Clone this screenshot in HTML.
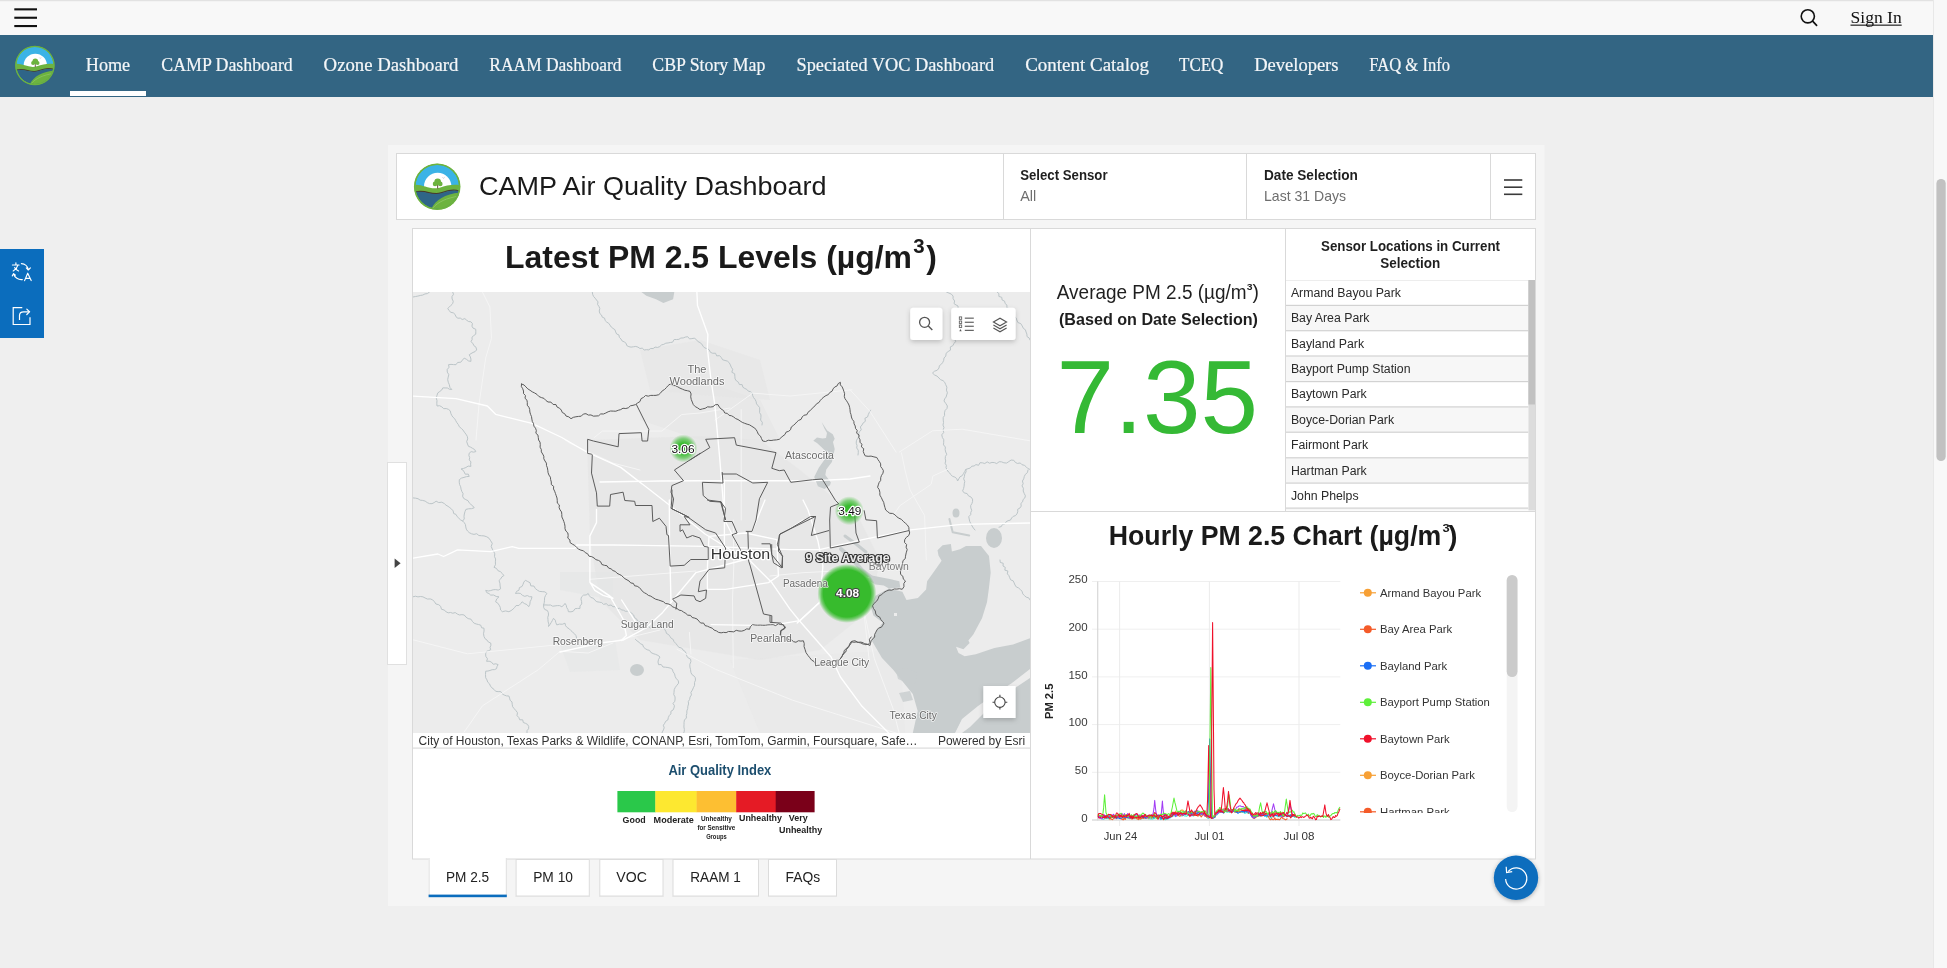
<!DOCTYPE html>
<html><head><meta charset="utf-8"><title>CAMP Air Quality Dashboard</title>
<style>html,body{margin:0;padding:0;width:1947px;height:968px;overflow:hidden;background:#efefef}svg{display:block;font-family:'Liberation Sans',sans-serif;will-change:transform}</style>
</head><body>
<svg width="1947" height="968" viewBox="0 0 1947 968">
<defs>
<filter id="fabsh" x="-50%" y="-50%" width="200%" height="200%"><feDropShadow dx="0" dy="1" stdDeviation="2" flood-opacity="0.3"/></filter>
<filter id="btnsh" x="-30%" y="-30%" width="160%" height="160%"><feDropShadow dx="0" dy="2" stdDeviation="2.5" flood-opacity="0.2"/></filter>
</defs>
<rect x="0" y="0" width="1933" height="35" fill="#f8f8f8" />
<rect x="0" y="0" width="1933" height="1.2" fill="#e2e2e2" />
<rect x="14.3" y="8.3" width="22.7" height="2.1" fill="#111" />
<rect x="14.3" y="16.7" width="22.7" height="2.1" fill="#111" />
<rect x="14.3" y="25" width="22.7" height="2.1" fill="#111" />
<circle cx="1807.8" cy="16.3" r="6.6" fill="none" stroke="#111" stroke-width="1.6"/>
<line x1="1812.6" y1="21.2" x2="1816.6" y2="25.4" stroke="#111" stroke-width="1.7" stroke-linecap="round"/>
<text x="1850.5" y="23" font-size="17.5" fill="#111" font-family="'Liberation Serif',serif" textLength="51.2" lengthAdjust="spacingAndGlyphs">Sign In</text>
<rect x="1850.5" y="24.6" width="51.2" height="1.1" fill="#111" />
<rect x="0" y="35" width="1933" height="62" fill="#336583" />
<text x="85.8" y="71.3" font-size="18" fill="#f4f6f8" font-family="'Liberation Serif',serif" textLength="44.4" lengthAdjust="spacingAndGlyphs" stroke="#f4f6f8" stroke-width="0.2">Home</text>
<text x="161.3" y="71.3" font-size="18" fill="#f4f6f8" font-family="'Liberation Serif',serif" textLength="131.5" lengthAdjust="spacingAndGlyphs" stroke="#f4f6f8" stroke-width="0.2">CAMP Dashboard</text>
<text x="323.6" y="71.3" font-size="18" fill="#f4f6f8" font-family="'Liberation Serif',serif" textLength="134.8" lengthAdjust="spacingAndGlyphs" stroke="#f4f6f8" stroke-width="0.2">Ozone Dashboard</text>
<text x="489.3" y="71.3" font-size="18" fill="#f4f6f8" font-family="'Liberation Serif',serif" textLength="132.3" lengthAdjust="spacingAndGlyphs" stroke="#f4f6f8" stroke-width="0.2">RAAM Dashboard</text>
<text x="652.3" y="71.3" font-size="18" fill="#f4f6f8" font-family="'Liberation Serif',serif" textLength="113.0" lengthAdjust="spacingAndGlyphs" stroke="#f4f6f8" stroke-width="0.2">CBP Story Map</text>
<text x="796.5" y="71.3" font-size="18" fill="#f4f6f8" font-family="'Liberation Serif',serif" textLength="197.7" lengthAdjust="spacingAndGlyphs" stroke="#f4f6f8" stroke-width="0.2">Speciated VOC Dashboard</text>
<text x="1025.2" y="71.3" font-size="18" fill="#f4f6f8" font-family="'Liberation Serif',serif" textLength="123.8" lengthAdjust="spacingAndGlyphs" stroke="#f4f6f8" stroke-width="0.2">Content Catalog</text>
<text x="1179" y="71.3" font-size="18" fill="#f4f6f8" font-family="'Liberation Serif',serif" textLength="44.4" lengthAdjust="spacingAndGlyphs" stroke="#f4f6f8" stroke-width="0.2">TCEQ</text>
<text x="1254.2" y="71.3" font-size="18" fill="#f4f6f8" font-family="'Liberation Serif',serif" textLength="84.3" lengthAdjust="spacingAndGlyphs" stroke="#f4f6f8" stroke-width="0.2">Developers</text>
<text x="1369.3" y="71.3" font-size="18" fill="#f4f6f8" font-family="'Liberation Serif',serif" textLength="80.7" lengthAdjust="spacingAndGlyphs" stroke="#f4f6f8" stroke-width="0.2">FAQ &amp; Info</text>
<rect x="70" y="91" width="76" height="5" fill="#ffffff" />
<g transform="translate(14.899999999999999,45.5) scale(0.4)">
<circle cx="50" cy="50" r="49.5" fill="#6db33f"/>
<clipPath id="lc34"><circle cx="50" cy="50" r="46.5"/></clipPath>
<g clip-path="url(#lc34)">
<rect x="0" y="0" width="100" height="100" fill="#3bb3e6"/>
<ellipse cx="51" cy="49" rx="29" ry="28.5" fill="#fff"/>
<path d="M0,46 C20,44 35,58 55,52 C70,47 85,44 100,47 L100,100 L0,100Z" fill="#6db33f"/>
<path d="M3,60 C25,54 40,68 58,62 C72,57 85,54 97,58 L97,60 C85,57 72,60 58,65 C40,71 25,58 3,63Z" fill="#4a3a2a"/>
<path d="M0,62 C25,57 40,70 58,64 C72,59 85,56 100,60 L100,100 L0,100Z" fill="#2f6588"/>
<path d="M36,100 C45,78 65,66 100,62 L100,100Z" fill="#6db33f"/>
<path d="M40,96 C52,82 70,74 96,70" fill="none" stroke="#b8de9a" stroke-width="0.8"/>
<line x1="51" y1="42" x2="51" y2="54" stroke="#5a4030" stroke-width="2"/>
<circle cx="51" cy="39.5" r="7" fill="#6db33f"/><circle cx="45.5" cy="44" r="5" fill="#6db33f"/><circle cx="56.5" cy="44" r="5" fill="#6db33f"/>
<path d="M61,30 l2.5,2.5 l2.5,-3.5" fill="none" stroke="#999" stroke-width="0.8"/>
</g>
<circle cx="50" cy="50" r="47.5" fill="none" stroke="#6db33f" stroke-width="2.5"/>
</g>
<rect x="1933" y="0" width="14" height="968" fill="#f8f8f8" />
<rect x="1933" y="0" width="1" height="968" fill="#e8e8e8" />
<rect x="1936.4" y="179" width="9.3" height="282" fill="#c1c1c1" rx="4.6"/>
<rect x="0" y="249" width="44" height="89" fill="#0b6dbd" />
<g fill="none" stroke="#fff" stroke-width="1.15" stroke-linecap="round" stroke-linejoin="round">
<path d="M12.4,265 H19.1 M15.9,262.8 V265 M17.8,265.4 C17,268 15.2,270 13.2,271 M14.6,267.6 C15.8,269.2 17.2,270.4 18.6,271"/>
<path d="M21.4,263.6 A7.2,7.2 0 0 1 28.3,269.6 M26.3,267.9 L28.3,270 L30.4,267.8"/>
<path d="M22.3,279.6 A8,8 0 0 1 13.6,273.8 M12.3,275.9 L13.6,273.6 L15.5,275.1"/>
<path d="M24.6,280.6 L27.7,273.2 L31.2,280.6 M25.9,278.3 H30"/>
</g>
<g fill="none" stroke="#fff" stroke-width="1.2" stroke-linejoin="miter">
<path d="M22.3,307.7 H13.2 V324.5 H30 V317.3"/>
<path d="M19.5,320 V315.5 C19.5,313 21.2,311.8 23.6,311.8 H29.3"/>
<path d="M26.8,309.1 L29.5,311.8 L26.8,314.5" stroke-linecap="round"/>
</g>
<rect x="388" y="145" width="1156.5" height="761" fill="#f5f5f5" />
<rect x="396.5" y="153.5" width="1139" height="66" fill="#fff" stroke="#d9d9d9" stroke-width="1"/>
<rect x="1003.0" y="154" width="1" height="65" fill="#d9d9d9" />
<rect x="1246.0" y="154" width="1" height="65" fill="#d9d9d9" />
<rect x="1490.0" y="154" width="1" height="65" fill="#d9d9d9" />
<g transform="translate(413.7,163.2) scale(0.47)">
<circle cx="50" cy="50" r="49.5" fill="#6db33f"/>
<clipPath id="lc437"><circle cx="50" cy="50" r="46.5"/></clipPath>
<g clip-path="url(#lc437)">
<rect x="0" y="0" width="100" height="100" fill="#3bb3e6"/>
<ellipse cx="51" cy="49" rx="29" ry="28.5" fill="#fff"/>
<path d="M0,46 C20,44 35,58 55,52 C70,47 85,44 100,47 L100,100 L0,100Z" fill="#6db33f"/>
<path d="M3,60 C25,54 40,68 58,62 C72,57 85,54 97,58 L97,60 C85,57 72,60 58,65 C40,71 25,58 3,63Z" fill="#4a3a2a"/>
<path d="M0,62 C25,57 40,70 58,64 C72,59 85,56 100,60 L100,100 L0,100Z" fill="#2f6588"/>
<path d="M36,100 C45,78 65,66 100,62 L100,100Z" fill="#6db33f"/>
<path d="M40,96 C52,82 70,74 96,70" fill="none" stroke="#b8de9a" stroke-width="0.8"/>
<line x1="51" y1="42" x2="51" y2="54" stroke="#5a4030" stroke-width="2"/>
<circle cx="51" cy="39.5" r="7" fill="#6db33f"/><circle cx="45.5" cy="44" r="5" fill="#6db33f"/><circle cx="56.5" cy="44" r="5" fill="#6db33f"/>
<path d="M61,30 l2.5,2.5 l2.5,-3.5" fill="none" stroke="#999" stroke-width="0.8"/>
</g>
<circle cx="50" cy="50" r="47.5" fill="none" stroke="#6db33f" stroke-width="2.5"/>
</g>
<text x="479" y="194.7" font-size="26.4" fill="#1a1a1a" textLength="347.5" lengthAdjust="spacingAndGlyphs">CAMP Air Quality Dashboard</text>
<text x="1020.2" y="180.2" font-size="14" fill="#1f1f1f" font-weight="bold" textLength="87.4" lengthAdjust="spacingAndGlyphs">Select Sensor</text>
<text x="1020.2" y="201.3" font-size="14.5" fill="#6e6e6e" textLength="16" lengthAdjust="spacingAndGlyphs">All</text>
<text x="1264" y="180.2" font-size="14" fill="#1f1f1f" font-weight="bold" textLength="93.8" lengthAdjust="spacingAndGlyphs">Date Selection</text>
<text x="1264" y="201.3" font-size="14.5" fill="#6e6e6e" textLength="82" lengthAdjust="spacingAndGlyphs">Last 31 Days</text>
<rect x="1504" y="179.2" width="18.3" height="1.6" fill="#3a3a3a" />
<rect x="1504" y="186.39999999999998" width="18.3" height="1.6" fill="#3a3a3a" />
<rect x="1504" y="193.5" width="18.3" height="1.6" fill="#3a3a3a" />
<rect x="412.5" y="228.5" width="1123" height="630.5" fill="#fff" stroke="#d9d9d9" stroke-width="1"/>
<rect x="1030" y="229" width="1" height="630" fill="#d9d9d9" />
<rect x="1031" y="511" width="504.5" height="1" fill="#d9d9d9" />
<rect x="1285" y="229" width="1" height="282" fill="#d9d9d9" />
<rect x="387.5" y="462.5" width="19" height="202" fill="#fff" stroke="#e0e0e0" stroke-width="1"/>
<path d="M394.6,558.5 L400.6,563.3 L394.6,568.1Z" fill="#444"/>
<rect x="428.6" y="858" width="78.19999999999999" height="38" fill="#fff" />
<rect x="428.6" y="858" width="1" height="38" fill="#dedede" />
<rect x="505.8" y="858" width="1" height="38" fill="#dedede" />
<rect x="428.6" y="894.6" width="78.19999999999999" height="2.6" fill="#0b6dbd" />
<rect x="516.1" y="859.5" width="73.19999999999993" height="36.5" fill="#fff" stroke="#dcdcdc" stroke-width="1"/>
<rect x="515.6" y="896" width="74.19999999999993" height="1" fill="#e4e4e4" />
<rect x="599.8" y="859.5" width="63.200000000000045" height="36.5" fill="#fff" stroke="#dcdcdc" stroke-width="1"/>
<rect x="599.3" y="896" width="64.20000000000005" height="1" fill="#e4e4e4" />
<rect x="673.0" y="859.5" width="85.5" height="36.5" fill="#fff" stroke="#dcdcdc" stroke-width="1"/>
<rect x="672.5" y="896" width="86.5" height="1" fill="#e4e4e4" />
<rect x="768.5" y="859.5" width="68" height="36.5" fill="#fff" stroke="#dcdcdc" stroke-width="1"/>
<rect x="768" y="896" width="69" height="1" fill="#e4e4e4" />
<text x="446" y="881.6" font-size="14.5" fill="#222" textLength="43.2" lengthAdjust="spacingAndGlyphs">PM 2.5</text>
<text x="533.2" y="881.6" font-size="14.5" fill="#222" textLength="39.8" lengthAdjust="spacingAndGlyphs">PM 10</text>
<text x="616.3" y="881.6" font-size="14.5" fill="#222" textLength="30.5" lengthAdjust="spacingAndGlyphs">VOC</text>
<text x="690.3" y="881.6" font-size="14.5" fill="#222" textLength="50.5" lengthAdjust="spacingAndGlyphs">RAAM 1</text>
<text x="785.5" y="881.6" font-size="14.5" fill="#222" textLength="34.6" lengthAdjust="spacingAndGlyphs">FAQs</text>
<circle cx="1516" cy="877.7" r="22.2" fill="#0b6dbd" filter="url(#fabsh)"/>
<path d="M1508.2,871.5 A10.6,10.6 0 1 1 1505.6,879" fill="none" stroke="#fff" stroke-width="1.2"/>
<path d="M1506.2,866.8 L1506.6,872.6 L1512.2,871.6" fill="none" stroke="#fff" stroke-width="1.2"/>
<clipPath id="mapclip"><rect x="413" y="292" width="617" height="441"/></clipPath>
<radialGradient id="cls" cx="50%" cy="50%" r="50%"><stop offset="0" stop-color="#38bb2e"/><stop offset="0.35" stop-color="#38bb2e"/><stop offset="0.7" stop-color="#38bb2e" stop-opacity="0.6"/><stop offset="1" stop-color="#38bb2e" stop-opacity="0"/></radialGradient>
<radialGradient id="clb" cx="50%" cy="50%" r="50%"><stop offset="0" stop-color="#37bb2d"/><stop offset="0.8" stop-color="#37bb2d"/><stop offset="0.9" stop-color="#37bb2d" stop-opacity="0.6"/><stop offset="1" stop-color="#37bb2d" stop-opacity="0"/></radialGradient>
<g clip-path="url(#mapclip)">
<rect x="413" y="292" width="617" height="441" fill="#ececec" />
<polygon points="587,440 700,436 760,440 800,470 860,520 880,560 870,610 820,650 760,660 700,650 640,640 600,600 590,540" fill="#e3e4e4" opacity="0.55"/>
<polygon points="560,572 613,572 613,600 560,590" fill="#e3e4e4" opacity="0.45"/>
<polygon points="560,645 615,640 620,670 570,672" fill="#e3e4e4" opacity="0.35"/>
<polygon points="640,400 700,380 760,400 780,440 700,440 640,420" fill="#e3e4e4" opacity="0.5"/>
<polygon points="730,660 900,650 905,733 760,733" fill="#e3e4e4" opacity="0.3"/>
<polygon points="640,350 700,340 760,360 770,400 700,395 650,390" fill="#e3e4e4" opacity="0.4"/>
<polygon points="870.8,607.1 875.5,595.8 888.9,588.6 902.4,591.7 905.5,597.9 906.5,599.9 917.9,597.9 926.1,589.6 927.1,581.3 934.4,571 941.6,560.7 938.5,555.5 937.5,550.3 942.6,545.2 950.9,544.1 951.9,551.4 960,549.3 966,546 981,546 989,556 990.7,572.4 988.9,588.5 987,602.2 982,618.3 973.3,634.4 968.4,640.6 969.6,643.1 963.4,649.3 956,646.8 958.5,653 964.7,656.2 975.8,654.3 994.4,648.1 1013,644.4 1030,638.2 1030,733 912.8,733 917.7,711 912.8,694 903,682 893.4,670 882,658 871.4,640 876.5,630.9 882.7,622.6 873.4,615.4" fill="#c8cdce" />
<polygon points="955,733 962,719 978,706 995,694 1012,683 1030,669 1030,678 1012,690 995,702 984,713 970,727 962,733" fill="#ececec" />
<ellipse cx="994" cy="538" rx="8" ry="10" fill="#c8cdce"/>
<ellipse cx="956" cy="513" rx="3.5" ry="4.5" fill="#c8cdce"/>
<polyline points="949.4,519 952.7,532.2 969.2,535.5" fill="none" stroke="#c8cdce" stroke-width="2" stroke-linejoin="round" stroke-linecap="round" />
<polyline points="841,549 852,559 862,570 872,578" fill="none" stroke="#c8cdce" stroke-width="4" stroke-linejoin="round" stroke-linecap="round" />
<polyline points="845,536 856,544 866,552" fill="none" stroke="#c8cdce" stroke-width="3" stroke-linejoin="round" stroke-linecap="round" />
<polygon points="869.3,575.1 880.7,577.2 891,579.3 899.3,581.3 900.3,587.5 888.9,588.6 883.8,585.5 875.5,584.4 870.3,581.3" fill="#c8cdce" />
<rect x="894" y="613" width="3" height="3" fill="#ececec" />
<polygon points="821.6,422.1 827.2,430.5 832.8,434.2 834.7,438.8 833,442 834.7,449 833.7,453.7 831.9,462.1 826.3,469.5 825.3,475.1 830.9,482.6 830,485.3 824.4,489.1 817.9,486.3 814.2,477 818.8,467.7 825.3,458.4 826.5,451.9 821.6,447.2 817,443 813.3,440.7 817,437.5 822.6,438.5 826,438 827,433 824.4,428.6" fill="#c8cdce" />
<polygon points="641.4,292 674.3,292 673.1,299.3 663.4,303 656,299.3 646.3,295.7" fill="#c8cdce" />
<polygon points="896,671 906,668 917,673 915,684 905,682 898,679" fill="#c8cdce" opacity="0.8"/>
<polygon points="899,693 910,691 913,700 903,702" fill="#c8cdce" opacity="0.8"/>
<ellipse cx="637" cy="670" rx="7" ry="6" fill="#c8cdce"/>
<polyline points="452.7,292 453.5,294.32 451.94,296.64 452.12,298.96 453.24,301.28 452.7,303.6 451.04,305.24 449.44,306.95 447.7,308.5 449.12,310.4 450.57,312.27 453.31,312.85 455.07,314.41 456.0,316.8 457.89,318.21 460.3,318.09 462.2,319.49 464.86,318.62 466.68,320.26 468.62,321.55 470.9,321.8 472.41,323.52 471.98,326.19 473.05,328.13 475.75,329.26 475.8,331.7 475.76,334.14 473.76,335.62 471.99,337.21 472.11,339.74 470.9,341.6 472.84,343.32 473.89,345.65 476.03,347.24 476.6,349.9 475.09,351.64 472.98,352.46 471.06,353.58 469.2,354.8 470.34,356.85 470.91,359.05 470.9,361.4 468.39,360.86 466.39,359.28 464.2,358.1 462.44,360.11 460.76,362.22 457.58,362.47 456.0,364.7 453.5,364.58 451.0,364.39 448.5,364.7 449.06,367.22 447.15,369.61 447.31,372.11 448.8,374.68 448.2,377.14 447.7,379.6 448.27,382.26 449.32,384.73 449.89,387.39 451.8,389.5 449.52,389.27 447.43,387.99 445.12,387.93 442.8,387.9 441.69,390.02 439.75,391.48 437.79,392.93 437.0,395.3 436.24,397.98 436.99,400.65 436.8,403.32 437.0,406.0 439.59,405.7 441.76,406.82 443.71,408.67 446.25,408.54 448.5,409.4 450.29,410.9 450.78,413.23 451.68,415.29 452.92,417.15 454.66,418.68 455.73,420.64 456.8,422.6 458.3,424.53 459.35,426.81 461.31,428.38 463.05,430.12 464.4,432.17 465.9,434.1 467.32,436.41 467.69,438.89 466.66,441.6 467.5,444.0 468.44,446.3 470.68,447.19 472.64,448.39 474.63,449.55 475.8,451.6 473.6,452.13 471.15,451.64 469.2,453.2 468.89,455.48 469.68,457.61 469.26,459.9 470.92,461.92 470.59,464.2 470.9,466.4 468.17,466.09 465.91,467.53 463.5,468.44 461.0,469.0 462.98,470.1 464.21,472.04 465.25,474.19 468.29,474.11 469.2,476.4 466.53,476.63 464.03,477.38 461.51,478.07 459.3,479.7 459.25,482.16 459.58,484.55 460.67,486.78 461.05,489.16 461.82,491.45 463.09,493.65 462.6,496.2 463.68,498.43 465.81,499.62 468.04,500.7 469.22,502.84 470.91,504.46 472.77,505.92 474.2,507.8 471.5,508.67 468.65,508.78 465.9,509.4 464.98,511.65 464.34,513.97 464.01,516.39 464.26,518.96 462.6,521.0 464.22,522.64 465.42,524.52 465.74,526.89 466.31,529.13 467.53,530.99 469.2,532.6 471.52,533.79 473.98,534.38 476.72,533.72 478.9,535.53 481.45,535.72 484.0,535.9 486.77,536.79 489.09,538.31 490.7,540.8 492.28,543.36 491.21,546.44 492.3,549.1 493.65,551.4 494.77,553.78 494.51,556.61 495.6,559.0 495.4,561.83 495.46,564.71 494.0,567.3 496.46,568.36 497.92,570.63 500.41,571.66 502.24,573.48 503.9,575.5 501.93,576.84 500.7,578.9 499.0,580.5 499.92,583.19 500.12,586.02 500.6,588.8 498.23,590.11 495.66,589.58 493.17,589.77 490.74,590.55 488.28,590.99 485.7,590.4 486.76,592.61 489.02,593.55 490.7,595.1 493.6,595.04 496.19,596.46 499.0,596.8 496.72,598.91 495.6,601.8 497.81,603.19 499.16,605.17 500.26,607.3 500.56,609.99 502.3,611.7 505.6,610.95 508.9,611.7 511.06,610.65 512.91,609.19 514.62,607.54 516.07,605.55 518.96,605.47 520.61,603.74 522.1,601.8 524.28,603.46 526.86,604.58 528.7,606.7 529.83,604.33 530.13,601.68 531.33,599.33 532.0,596.8 529.57,596.71 527.34,595.57 524.74,596.34 522.48,595.35 520.42,593.43 518.02,593.16 515.5,593.5 516.57,591.36 518.96,590.2 519.41,587.59 521.93,586.54 523.0,584.39 523.84,582.08 525.4,580.3 527.73,581.52 530.05,582.75 530.81,585.86 533.97,586.08 535.3,588.5 537.34,590.15 539.54,591.43 542.2,591.64 544.87,591.84 546.9,593.5 545.46,595.58 544.58,597.81 544.49,600.28 544.24,602.69 543.6,605.0 545.9,604.95 548.18,605.09 550.49,604.99 552.66,606.23 554.99,605.92 557.31,605.6 559.61,605.62 561.8,606.7 563.66,605.3 565.0,603.4 566.27,605.3 566.7,607.55 567.91,609.48 568.4,611.7 570.94,611.83 573.28,611.23 575.07,608.7 577.5,608.43 580.0,608.4 579.94,606.03 581.7,603.91 581.58,601.52 580.93,599.07 581.6,596.8 583.52,595.14 586.17,594.94 588.2,593.5 589.32,595.68 590.83,597.47 593.39,598.21 594.8,600.1 596.79,601.72 599.21,602.14 601.64,602.54 603.54,604.4 606.37,603.68 608.28,605.52 611.04,605.02 613.0,606.7 615.34,606.67 616.98,608.89 619.56,608.08 621.33,609.89 623.56,610.22 625.53,611.39 627.96,611.06 630.0,612.0 631.92,613.42 633.66,615.01 634.43,617.57 636.5,618.83 637.63,621.04 640.0,622.0 641.56,623.93 644.41,623.71 645.94,625.7 648.45,626.05 650.0,628.0" fill="none" stroke="#bcc5c8" stroke-width="1" stroke-linejoin="round" stroke-linecap="round" />
<polyline points="543.6,605 543.68,607.44 544.68,609.43 547.42,610.57 548.34,612.6 548.5,615.0 547.76,617.3 547.98,619.6 548.13,621.9 548.92,624.2 548.5,626.5 549.95,624.57 551.2,622.52 552.4,620.44 553.5,618.3 555.27,620.16 555.84,622.63 556.8,624.9 559.49,624.1 562.37,624.25 565.0,623.2 565.59,625.73 567.12,627.53 569.27,628.85 570.9,630.58 572.65,632.2 574.51,633.75 575.97,635.6 576.6,638.1" fill="none" stroke="#bcc5c8" stroke-width="1" stroke-linejoin="round" stroke-linecap="round" />
<polyline points="413,596.8 415.48,596.22 417.95,596.9 420.42,596.51 422.9,596.8 425.13,598.01 427.43,599.05 430.24,598.92 432.6,599.82 434.5,601.8 435.93,604.01 438.68,604.7 440.63,606.31 441.46,609.23 444.13,610.0 446.0,611.7 448.14,612.84 450.56,612.47 452.77,613.24 455.24,612.59 457.32,614.05 459.51,614.97 461.92,614.64 464.2,615.0 465.94,617.07 468.12,618.6 471.02,619.2 472.5,621.6 474.13,623.19 476.23,623.97 478.47,624.52 480.68,625.11 481.68,627.8 484.0,628.2 484.06,630.97 483.52,633.73 484.0,636.5 485.09,638.72 487.02,640.09 488.38,642.04 490.7,643.0 490.93,645.23 490.04,647.47 490.7,649.7 488.69,650.61 486.6,651.3 485.64,653.8 485.77,656.3 487.49,658.8 486.6,661.3 489.12,661.19 491.37,662.02 493.22,664.26 495.84,663.81 498.1,664.6 497.04,666.55 496.5,668.7 494.44,669.63 492.18,669.68 490.08,670.44 487.93,671.02 485.7,671.2 485.51,674.5 485.7,677.8 486.93,679.84 487.74,682.18 489.52,683.83 490.47,686.08 491.98,687.92 494.0,689.4 495.69,691.33 498.1,691.63 500.69,691.55 502.19,693.9 504.23,695.05 506.41,695.87 508.9,696.0 509.58,698.11 510.11,700.28 511.96,701.91 512.2,704.2 512.65,706.74 514.26,708.71 515.92,710.64 517.46,712.64 517.0,715.63 518.8,717.5 519.73,719.8 522.71,719.83 523.31,722.49 525.53,723.35 527.57,724.43 528.7,726.5 528.57,728.78 526.99,730.68 527.0,733.0" fill="none" stroke="#bcc5c8" stroke-width="1" stroke-linejoin="round" stroke-linecap="round" />
<polyline points="413,497.9 415.55,498.17 418.0,498.7 420.15,500.13 422.68,500.44 425.1,501.07 427.21,502.58 429.5,503.6 432.01,503.66 434.13,502.62 436.1,501.2 438.7,502.56 441.8,502.21 444.4,503.6 446.0,505.2 448.05,506.33 449.86,507.7 451.62,509.14 453.11,510.85 453.7,513.55 456.0,514.4 457.14,516.56 458.82,518.18 460.48,519.82 462.6,521.0" fill="none" stroke="#bcc5c8" stroke-width="1" stroke-linejoin="round" stroke-linecap="round" />
<polyline points="413,297 415.44,296.54 417.87,296.08 420.26,295.48 422.71,295.07 424.94,293.93 427.41,293.6 429.5,292.0" fill="none" stroke="#bcc5c8" stroke-width="1" stroke-linejoin="round" stroke-linecap="round" />
<polyline points="592.3,292 592.65,294.33 593.53,296.42 595.14,298.17 596.53,300.03 597.99,301.86 597.6,304.52 598.92,306.41 599.8,308.5 599.23,311.0 599.8,313.5 601.48,314.97 602.29,317.21 604.57,318.14 605.17,320.56 606.75,322.11 608.74,323.31 610.0,325.14 611.23,327.01 613.0,328.4 614.91,329.7 615.67,331.91 616.62,333.98 618.92,334.96 619.38,337.42 620.96,338.98 622.07,340.91 624.32,341.93 626.12,343.32 626.8,345.6 628.87,346.68 631.07,347.12 633.42,346.77 635.77,346.44 637.93,347.1 639.94,348.47 642.29,348.16 644.21,350.01 646.56,349.66 648.8,349.9 650.68,348.45 653.18,348.54 655.06,347.1 657.65,347.44 659.76,346.55 661.56,344.9 663.79,344.33 665.8,343.2 668.1,342.94 670.33,342.49 672.61,342.17 674.16,339.5 676.54,339.52 678.87,339.35 680.84,338.04 683.19,337.96 685.3,337.1 687.69,336.7 689.52,338.88 691.89,338.59 694.28,338.2 696.3,339.5 697.75,341.45 699.99,342.61 701.87,344.13 703.13,346.27 704.8,348.0 707.24,348.54 709.2,349.9 710.49,352.36 712.71,353.27 715.52,353.21 716.68,355.87 719.58,355.66 721.26,357.49 722.64,359.79 725.0,360.48 727.39,361.11 729.2,362.7 730.36,364.89 731.25,367.18 732.7,369.26 731.83,372.26 734.67,373.77 734.83,376.36 735.08,378.91 736.5,381.0 738.4,382.18 739.39,384.55 742.14,384.62 742.92,387.26 744.81,388.46 746.87,389.43 748.35,391.17 750.7,391.75 752.4,393.2 752.64,395.59 753.63,397.66 755.1,399.51 756.11,401.57 756.55,403.88 758.06,405.72 759.62,407.54 759.7,410.0 759.55,412.58 760.98,414.92 760.88,417.5 760.62,420.09 762.33,422.39 762.0,425.0" fill="none" stroke="#bcc5c8" stroke-width="1" stroke-linejoin="round" stroke-linecap="round" />
<polyline points="946.5,292 948.9,293.04 951.31,294.08 953.1,296.1 953.07,298.64 954.63,300.99 954.0,303.6 955.96,304.87 958.0,306.0 958.13,308.35 958.64,310.74 957.48,313.0 958.35,315.41 957.31,317.68 957.0,320.0 957.79,322.46 957.59,324.86 956.7,327.21 955.66,329.55 957.05,332.05 956.67,334.44 955.63,336.78 954.77,339.14 955.6,341.6 953.98,343.48 952.82,345.7 950.32,346.91 950.48,350.12 948.2,351.5 946.14,353.24 945.79,356.08 944.0,358.0 943.7,360.35 942.75,362.38 941.38,364.19 939.38,365.69 939.0,368.0 937.26,370.22 934.56,371.19 932.5,373.0 934.48,374.91 937.0,376.11 939.0,378.0 940.6,379.72 943.03,380.61 944.7,382.26 945.7,384.6 946.9,387.2 946.44,390.15 947.4,392.8 946.7,394.91 946.08,397.06 944.68,398.88 944.0,401.0 945.79,403.44 947.4,406.0 946.97,408.47 945.11,410.42 944.47,412.81 944.57,415.47 943.2,417.6 943.24,420.09 943.54,422.55 942.98,425.09 944.0,427.5 943.1,429.92 943.66,432.57 941.76,434.83 942.4,437.5 943.77,439.73 943.68,442.29 943.5,444.88 945.35,447.0 945.17,449.58 945.7,452.0 946.76,454.22 945.42,456.49 945.25,458.74 945.71,460.97 945.09,463.23 946.37,465.45 946.0,467.7 947.7,471.0" fill="none" stroke="#bcc5c8" stroke-width="1" stroke-linejoin="round" stroke-linecap="round" />
<polyline points="997,292 998.86,293.59 998.9,296.45 1001.77,297.33 1002.1,299.99 1004.58,301.14 1005.2,303.6 1006.94,305.1 1006.88,307.88 1009.59,308.7 1010.1,311.07 1011.72,312.66 1013.02,314.47 1014.23,316.35 1016.06,317.79 1016.8,320.0 1017.88,322.55 1020.81,323.64 1022.21,325.94 1023.4,328.4 1025.42,329.81 1026.05,332.01 1026.88,334.1 1027.03,336.57 1029.13,337.94 1030.0,340.0" fill="none" stroke="#bcc5c8" stroke-width="1" stroke-linejoin="round" stroke-linecap="round" />
<polyline points="870.5,410.2 869.36,412.35 868.31,414.57 867.55,416.94 864.94,418.26 865.37,421.31 863.21,422.88 862.0,425.0 860.37,426.96 861.27,429.82 859.49,431.73 858.56,433.94 858.95,436.62 857.45,438.63 856.4,440.8 856.22,443.22 857.04,445.52 856.71,447.96 858.22,450.18 858.31,452.57 858.0,455.0" fill="none" stroke="#bcc5c8" stroke-width="1" stroke-linejoin="round" stroke-linecap="round" />
<polyline points="635.4,639.3 637.01,640.88 638.92,642.09 640.42,643.8 642.66,644.63 643.51,647.1 645.21,648.58 647.16,649.75 649.57,650.38 650.8,652.4 653.08,653.59 655.57,654.36 657.95,655.36 660.0,657.0 658.55,659.39 657.99,661.94 658.6,664.7 661.22,664.52 662.95,666.99 665.43,667.22 667.88,667.52 670.25,668.08 672.4,669.3 673.08,671.77 674.55,673.89 675.13,676.42 676.21,678.71 678.3,680.55 678.6,683.2 676.92,685.24 675.35,687.33 674.23,689.64 674.0,692.4 673.75,694.61 675.0,696.83 675.09,699.04 674.81,701.26 673.03,703.47 674.43,705.69 674.0,707.9 673.09,709.98 670.93,711.3 670.86,713.89 669.26,715.54 668.31,717.6 667.84,719.94 665.7,721.28 664.7,723.3 663.35,725.23 664.19,727.79 663.42,729.89 662.4,731.91 661.6,734.0" fill="none" stroke="#bcc5c8" stroke-width="1" stroke-linejoin="round" stroke-linecap="round" />
<polyline points="663.2,627.7 664.63,629.37 665.8,631.26 666.51,633.49 668.66,634.6 669.94,636.4 671.15,638.24 673.2,639.44 674.0,641.6 675.74,643.38 677.31,645.32 678.82,647.33 681.66,648.0 683.09,650.08 685.18,651.51 686.3,653.9 686.87,656.17 688.23,657.97 690.62,659.16 690.9,661.6 689.84,664.3 689.88,667.0 690.56,669.7 690.9,672.4 691.83,674.46 693.85,675.86 695.27,677.63 695.5,680.1 694.52,682.54 694.57,685.36 693.38,687.72 692.35,690.14 690.9,692.4 691.45,694.92 690.06,697.06 689.65,699.39 688.32,701.53 688.56,703.99 687.84,706.26 687.68,708.64 686.87,710.89 686.85,713.3 686.3,715.6 686.39,717.98 684.45,720.02 684.06,722.32 684.01,724.68 683.91,727.02 684.38,729.47 684.17,731.8 683.2,734.0" fill="none" stroke="#bcc5c8" stroke-width="1" stroke-linejoin="round" stroke-linecap="round" />
<polyline points="947.7,471 949.39,472.63 950.75,474.58 952.39,476.26 954.86,477.11 956.71,478.58 957.6,481.0 958.76,478.91 959.96,476.84 962.31,475.6 963.47,473.51 964.7,471.46 965.9,469.4 968.01,468.69 970.16,468.08 971.8,466.2 974.1,465.98 975.94,464.59 978.61,465.28 979.98,462.72 982.4,462.8 984.79,463.5 987.18,461.86 989.57,463.21 991.96,462.44 994.34,462.59 996.73,463.55 999.12,461.74 1001.51,461.83 1003.9,462.8 1006.6,463.06 1008.85,461.57 1011.1,460.05 1013.8,460.3 1015.3,462.37 1017.37,463.43 1020.29,462.97 1021.98,464.7 1024.32,465.29 1026.15,466.77 1027.84,468.5 1030.0,469.4" fill="none" stroke="#bcc5c8" stroke-width="1" stroke-linejoin="round" stroke-linecap="round" />
<polyline points="965.9,469.4 966.06,471.87 964.76,474.12 964.4,476.51 963.67,478.84 964.75,481.45 964.29,483.82 964.1,486.24 963.56,488.6 962.6,490.9 964.25,492.94 967.08,493.55 968.5,495.87 970.92,496.98 972.5,499.1 972.58,501.39 971.92,503.55 970.67,505.61 970.8,507.91 971.72,510.33 970.79,512.45 970.7,514.7 968.76,516.66 969.2,519.0 969.76,521.52 970.92,523.71 972.04,525.93 973.36,528.05 975.0,530.0" fill="none" stroke="#bcc5c8" stroke-width="1" stroke-linejoin="round" stroke-linecap="round" />
<polyline points="1028,470 1027.44,472.6 1025.4,474.3 1024.29,476.49 1023.72,478.85 1022.43,480.99 1023.16,483.72 1022.0,485.9 1023.36,488.2 1023.21,491.02 1024.22,493.44 1025.4,495.8 1024.8,497.97 1023.06,499.58 1022.63,501.84 1020.89,503.45 1021.2,506.08 1020.0,507.95 1017.68,509.27 1017.76,511.78 1016.96,513.86 1015.5,515.6 1013.28,516.34 1011.67,517.94 1010.44,520.1 1008.1,520.66 1006.13,521.75 1004.92,523.94 1002.47,524.35 1001.31,526.59 999.0,527.2" fill="none" stroke="#bcc5c8" stroke-width="1" stroke-linejoin="round" stroke-linecap="round" />
<polyline points="1000,560 1000.28,562.45 1003.23,563.29 1003.02,566.04 1005.26,567.31 1004.85,570.17 1007.83,570.99 1007.36,573.89 1008.89,575.59 1009.71,577.71 1010.6,579.8 1013.18,580.86 1014.15,582.89 1015.0,585.0 1016.34,586.99 1018.67,587.99 1020.37,589.63 1022.09,591.24 1022.78,593.89 1024.42,595.58 1026.2,597.13 1028.76,597.9 1030.0,600.0" fill="none" stroke="#bcc5c8" stroke-width="1" stroke-linejoin="round" stroke-linecap="round" />
<polyline points="482.4,292 489.9,306.9 491.5,338.3 485.7,358 479,404.4 476,440" fill="none" stroke="#f5f5f5" stroke-width="1.0" stroke-linejoin="round" stroke-linecap="round" />
<polyline points="751,393 790,396 852,389.8" fill="none" stroke="#f5f5f5" stroke-width="1.0" stroke-linejoin="round" stroke-linecap="round" />
<polyline points="751,394.4 729.2,410 715,420" fill="none" stroke="#f5f5f5" stroke-width="1.0" stroke-linejoin="round" stroke-linecap="round" />
<polyline points="849.8,389.5 869.7,411 896,452" fill="none" stroke="#f5f5f5" stroke-width="1.0" stroke-linejoin="round" stroke-linecap="round" />
<polyline points="899.4,452 932.5,430.8 962.2,429.2 1030,440.8" fill="none" stroke="#f5f5f5" stroke-width="1.0" stroke-linejoin="round" stroke-linecap="round" />
<polyline points="413,639.8 467.5,653.8 558.5,644.7 613,641.4 660,630" fill="none" stroke="#f5f5f5" stroke-width="1.0" stroke-linejoin="round" stroke-linecap="round" />
<polyline points="464.2,732 482.4,705.9 538.6,669.5 560.1,651.3 588.2,653 613,643" fill="none" stroke="#f5f5f5" stroke-width="1.0" stroke-linejoin="round" stroke-linecap="round" />
<polyline points="677,649.3 715.6,669.3 792.6,700.2 899,734" fill="none" stroke="#f5f5f5" stroke-width="1.0" stroke-linejoin="round" stroke-linecap="round" />
<polyline points="733.3,520 733.8,566.1 732.5,600 733.3,667.8" fill="none" stroke="#f5f5f5" stroke-width="1.0" stroke-linejoin="round" stroke-linecap="round" />
<polyline points="689.4,632.4 690.9,653.9" fill="none" stroke="#f5f5f5" stroke-width="1.0" stroke-linejoin="round" stroke-linecap="round" />
<polyline points="865,615.4 874.3,658.6 892.8,707.9 899,732.5" fill="none" stroke="#f5f5f5" stroke-width="1.0" stroke-linejoin="round" stroke-linecap="round" />
<polyline points="741.2,409.6 741.2,520" fill="none" stroke="#f5f5f5" stroke-width="1.0" stroke-linejoin="round" stroke-linecap="round" />
<polyline points="590,579.3 695.8,571" fill="none" stroke="#f5f5f5" stroke-width="1.0" stroke-linejoin="round" stroke-linecap="round" />
<polyline points="770,576 803,572.7 836.1,571 869,577.7" fill="none" stroke="#f5f5f5" stroke-width="1.0" stroke-linejoin="round" stroke-linecap="round" />
<polyline points="864.2,615.7 869.2,660" fill="none" stroke="#f5f5f5" stroke-width="1.0" stroke-linejoin="round" stroke-linecap="round" />
<polyline points="947.7,469.4 932.9,476 931.2,484.3 899.8,505.7 893.2,515.6" fill="none" stroke="#f5f5f5" stroke-width="1.0" stroke-linejoin="round" stroke-linecap="round" />
<polyline points="901.5,452.9 905,470 910,490 924.6,515.6 926.3,560" fill="none" stroke="#f5f5f5" stroke-width="1.0" stroke-linejoin="round" stroke-linecap="round" />
<polyline points="565,440 570,443.3 613,463.1 640,470" fill="none" stroke="#f5f5f5" stroke-width="1.0" stroke-linejoin="round" stroke-linecap="round" />
<polyline points="594,437.7 602.5,431 662,431 681.8,414.5 700,413 730,408" fill="none" stroke="#f5f5f5" stroke-width="1.0" stroke-linejoin="round" stroke-linecap="round" />
<polyline points="413,396.1 456,398.6 487.4,406 495.6,414.3 532,423.4 561.8,437.5 586.6,452 620.7,467.4 648.8,489 671.9,507 705,534 745,559" fill="none" stroke="#ffffff" stroke-width="1.35" stroke-linejoin="round" stroke-linecap="round" />
<polyline points="696.9,292 697.5,305.4 707.9,334.6 707.3,348 711,380 714.8,404.6 719.8,459.2 724.7,520 740,550 748.7,559.5" fill="none" stroke="#ffffff" stroke-width="1.35" stroke-linejoin="round" stroke-linecap="round" />
<polyline points="413,558.2 437.8,554 443.6,556.5 457.6,549.9 490.7,551.6 512.2,546.6 518.8,548.3 575,548.3 576.6,545 613,545 707.4,546.3 790,549.6 819.6,549.6 862.6,539.7 910.5,529.8 961.4,524.3 1030,523" fill="none" stroke="#ffffff" stroke-width="1.35" stroke-linejoin="round" stroke-linecap="round" />
<polyline points="596.5,509.4 596.5,522.6 589.9,535.9 589.9,582.1 594.8,590.4 603.1,595.4 613,598.4 590,582.6 609.8,595.9 623,619 626.4,635.5 621.4,640.5" fill="none" stroke="#ffffff" stroke-width="1.35" stroke-linejoin="round" stroke-linecap="round" />
<polyline points="669.3,500 669.5,540 671,602.5" fill="none" stroke="#ffffff" stroke-width="1.35" stroke-linejoin="round" stroke-linecap="round" />
<polyline points="600,482 660,481 700,480.7 815.7,480.7 850,479 870,476" fill="none" stroke="#ffffff" stroke-width="1.35" stroke-linejoin="round" stroke-linecap="round" />
<polyline points="724.4,480 724.4,566" fill="none" stroke="#ffffff" stroke-width="1.35" stroke-linejoin="round" stroke-linecap="round" />
<polyline points="709,536.4 745.4,533 776.8,539.7 778.4,576 768.5,582.6 725.5,589.3 707.4,589.3 707.4,567.8 709,536.4" fill="none" stroke="#ffffff" stroke-width="1.35" stroke-linejoin="round" stroke-linecap="round" />
<polyline points="745.4,559.5 695.8,572.7 662.7,612.4 646.2,627.7 623.1,640.1 600,643.1 560,652" fill="none" stroke="#ffffff" stroke-width="1.35" stroke-linejoin="round" stroke-linecap="round" />
<polyline points="748.7,559.5 771.8,582.6 790,609.1 798.8,620 831.1,657 840.4,677 862,706.3 889.7,734" fill="none" stroke="#ffffff" stroke-width="1.35" stroke-linejoin="round" stroke-linecap="round" />
<polyline points="803,500 808,510 818,541.3 822.9,566.1 819.6,602.5 799.8,620.7 770,625.6 711,624.7" fill="none" stroke="#ffffff" stroke-width="1.35" stroke-linejoin="round" stroke-linecap="round" />
<polyline points="797.2,623.1 818.8,603.1" fill="none" stroke="#ffffff" stroke-width="1.35" stroke-linejoin="round" stroke-linecap="round" />
<polyline points="765,500 752,531.4" fill="none" stroke="#ffffff" stroke-width="1.35" stroke-linejoin="round" stroke-linecap="round" />
<polyline points="779,534.7 790,528.9 803,520" fill="none" stroke="#ffffff" stroke-width="1.35" stroke-linejoin="round" stroke-linecap="round" />
<polyline points="621.6,600 635.4,621.6" fill="none" stroke="#ffffff" stroke-width="1.35" stroke-linejoin="round" stroke-linecap="round" />
<polyline points="521.5,384 524.06,384.97 525.95,386.93 527.83,388.9 530.09,390.31 532.26,391.84 534.7,393.0 536.98,394.4 538.83,396.45 541.32,397.55 543.99,398.37 545.83,400.43 548.0,402.0 550.92,402.09 553.09,404.47 556.0,404.6 557.06,407.03 559.56,408.2 561.26,410.07 562.3,412.52 564.73,413.75 566.0,416.0 568.78,416.84 571.0,418.7 573.32,417.33 575.91,416.77 578.57,416.42 581.26,416.16 583.34,414.04 586.0,413.7 588.32,415.08 590.98,414.95 593.34,416.13 596.0,416.0 598.62,415.8 600.72,413.92 603.43,414.01 605.8,413.0 608.13,411.77 610.57,411.0 613.21,411.12 615.84,411.21 618.24,410.28 620.7,409.6 622.99,408.24 625.83,408.52 628.34,407.81 630.42,405.82 633.0,405.34 635.5,404.6 637.67,402.96 639.99,401.5 641.05,398.64 643.57,397.39 645.5,395.5 648.19,396.18 650.79,395.38 653.44,395.41 656.09,395.35 658.7,394.7 660.63,392.93 662.28,390.86 664.56,389.47 666.4,387.6 668.09,385.58 670.2,384.0 672.45,385.52 675.24,385.62 677.64,386.75 679.94,388.14 682.38,389.15 684.8,390.21 687.43,390.73 690.0,391.4 691.09,393.93 690.71,396.83 691.27,399.5 692.27,402.05 693.3,404.6 695.25,406.65 697.75,407.95 700.0,409.6 702.57,408.87 705.18,408.31 707.54,406.85 710.37,407.05 713.03,406.66 715.27,404.73 718.0,404.6 719.32,406.98 721.06,409.03 723.56,410.47 724.7,413.0 727.27,413.36 729.06,415.32 731.57,415.8 733.72,417.03 735.69,418.61 738.0,419.5 740.12,420.98 742.28,422.37 744.69,423.32 747.14,424.19 749.67,424.92 751.83,426.32 754.02,427.68 756.0,429.4 757.3,431.74 758.34,434.24 760.47,436.1 761.53,438.58 762.7,441.0 765.55,441.5 768.22,440.26 771.04,440.53 773.79,440.08 776.56,439.87 779.3,439.3 781.07,437.59 782.95,436.01 784.94,434.53 786.07,432.15 788.65,431.31 790.54,429.73 791.32,426.97 793.31,425.49 795.17,423.88 796.77,422.0 798.63,420.38 801.04,419.37 802.2,417.01 803.93,415.26 806.8,414.74 807.93,412.35 809.9,410.85 811.62,409.09 813.25,407.24 815.18,405.71 816.66,403.69 818.93,402.52 820.33,400.41 821.99,398.6 823.87,397.0 825.92,395.6 828.35,394.6 829.74,392.49 832.01,391.32 833.09,388.88 834.71,387.01 837.06,385.93 838.22,383.57 840.4,382.3 840.33,384.89 842.14,386.84 843.11,389.07 843.89,391.37 844.61,393.69 844.31,396.35 844.99,398.68 846.5,400.73 847.83,402.85 848.99,405.02 849.64,407.36 850.04,409.78 850.23,412.28 851.03,414.57 851.42,417.0 852.25,419.28 853.83,421.32 854.05,423.8 855.22,425.97 855.51,428.43 857.21,430.42 856.64,433.17 859.04,434.93 858.8,437.57 860.03,439.72 860.04,442.27 861.93,444.2 861.43,446.92 863.72,448.71 863.25,451.44 864.08,453.72 865.2,455.9 868.1,456.31 871.08,456.12 873.93,456.89 876.8,457.5 877.99,459.66 879.46,461.67 880.65,463.83 880.65,466.58 882.22,468.54 883.4,470.7 882.96,473.21 881.53,475.37 880.69,477.74 880.7,480.4 879.11,482.51 878.29,484.88 877.6,487.3 879.21,489.59 879.86,492.25 879.87,495.15 881.31,497.51 882.4,500.0 883.7,502.34 884.23,504.94 884.95,507.48 885.7,510.0 887.7,511.69 889.76,513.28 892.69,513.47 894.93,514.77 896.76,516.74 898.9,518.2 901.46,519.38 903.28,521.38 905.32,523.14 907.32,524.93 908.8,527.3 909.03,530.19 909.7,533.0 908.62,535.67 906.27,537.39 904.7,539.7 904.51,542.38 906.58,544.49 906.12,547.24 907.2,549.6 906.2,552.86 905.5,556.2 905.23,558.68 903.09,560.47 902.62,562.88 902.2,565.3 901.88,568.37 900.44,571.25 900.6,574.4 902.81,576.18 903.38,579.16 905.5,581.0 903.83,583.54 903.94,586.79 902.2,589.3 899.52,588.69 896.89,589.07 894.24,588.97 891.66,590.25 889.0,590.0 886.31,591.11 883.79,592.52 881.71,594.66 879.1,595.9 878.15,598.84 876.53,601.34 874.14,603.32 872.5,605.8 873.52,608.57 875.33,611.01 875.8,614.0 877.26,615.98 879.68,617.1 880.75,619.43 882.35,621.29 884.0,623.1 882.76,625.28 881.33,627.29 878.54,628.07 876.97,629.96 875.8,632.2 874.69,634.35 874.64,636.97 872.86,638.83 871.17,640.73 870.53,643.09 870.0,645.5 867.84,644.33 865.16,644.58 863.22,642.82 860.9,642.1 857.82,642.31 854.91,640.69 851.8,641.3 850.56,644.34 848.33,646.61 846.0,648.8 844.09,650.69 843.95,653.63 842.35,655.7 841.02,657.94 839.4,660.0 836.85,659.97 834.57,660.92 832.09,661.14 830.06,663.06 827.74,663.87 825.25,664.05 822.69,663.95 820.38,664.83 817.87,664.91 815.7,666.3 815.32,663.83 814.2,661.6 811.61,660.1 809.83,657.77 808.0,655.5 806.02,652.63 805.0,649.3 804.06,646.54 804.23,643.58 803.4,640.8 800.91,641.1 798.36,640.74 795.97,642.27 793.4,641.6 791.56,639.8 788.75,639.84 787.05,637.76 784.96,636.45 782.1,636.58 780.3,634.7 781.0,630.8 784.9,628.5 783.4,624.7 780.82,624.62 778.25,623.84 775.67,625.59 773.1,624.71 770.52,624.83 767.95,624.91 765.38,625.25 762.8,625.28 760.23,625.12 757.65,625.21 755.08,625.07 752.5,624.7 750.39,626.6 749.5,629.3 746.76,628.83 744.27,630.39 741.68,631.13 738.98,631.03 736.21,630.31 733.71,631.85 731.0,631.6 728.5,631.47 726.09,632.65 723.58,632.35 721.12,632.83 718.6,632.4 716.51,630.96 714.1,630.09 712.28,628.2 709.86,627.34 707.57,626.26 705.03,625.6 703.58,623.07 700.67,623.06 698.89,621.08 697.14,619.06 694.78,618.11 692.2,617.53 690.52,615.38 687.73,615.17 685.83,613.4 683.64,612.16 681.58,610.67 679.0,610.09 677.0,608.5 674.62,607.6 672.27,606.66 670.42,604.63 667.98,603.86 665.38,603.45 663.41,601.68 660.99,600.87 658.6,600.0 655.52,599.17 652.8,597.5 650.81,596.16 648.41,595.41 646.54,593.9 644.41,592.75 642.43,591.4 640.98,589.26 639.2,587.59 637.22,586.24 634.61,585.81 633.35,583.38 630.74,582.95 629.11,581.07 627.03,579.87 624.92,578.71 623.14,577.04 621.35,575.4 619.17,574.34 616.99,573.28 615.35,571.41 613.0,570.6 611.1,568.86 608.6,568.06 607.04,565.78 604.34,565.29 601.85,564.48 600.6,561.71 598.44,560.38 595.9,559.63 593.97,557.94 591.78,556.66 589.06,556.2 587.59,553.77 585.29,552.66 583.47,550.79 580.86,550.16 578.53,549.1 576.6,547.4 574.69,545.38 572.26,544.06 570.0,542.5 569.93,539.97 567.79,538.08 568.18,535.41 567.85,532.97 565.89,531.02 565.01,528.74 564.99,526.2 564.55,523.78 563.8,521.46 562.91,519.19 561.87,516.96 561.8,514.43 561.56,511.96 560.02,509.88 559.12,507.61 559.39,504.98 557.31,503.07 557.26,500.54 557.03,498.06 556.23,495.76 555.44,493.45 554.61,491.15 553.5,488.95 553.67,486.35 551.3,484.52 551.31,481.97 550.65,479.63 550.39,477.16 548.94,475.06 548.07,472.77 547.79,470.31 547.4,467.88 546.5,465.61 546.38,463.1 544.98,460.98 543.8,458.79 543.84,456.23 542.69,454.04 541.35,451.9 541.28,449.37 540.07,447.19 540.27,444.59 540.01,442.12 538.6,440.0 538.29,437.54 537.96,435.09 535.85,433.19 536.33,430.49 535.49,428.19 533.88,426.14 533.57,423.68 532.34,421.51 531.86,419.1 531.52,416.65 530.57,414.39 529.86,412.06 529.7,409.56 528.93,407.24 527.25,405.2 527.32,402.63 526.97,400.19 524.97,398.25 525.49,395.54 523.52,393.59 523.51,391.04 522.72,388.73 521.39,386.59 521.5,384.0" fill="none" stroke="#5c5c5c" stroke-width="1.0" stroke-linejoin="round" stroke-linecap="round" />
<polyline points="840.4,658.6 842.05,656.36 842.99,653.65 845.68,652.08 846.5,649.3 848.72,647.13 849.58,644.14 851.2,641.6 853.56,642.33 856.12,641.98 858.53,642.44 860.93,643.0 863.21,644.15 865.78,643.75 868.1,644.7 869.92,642.45 869.45,639.28 871.2,637.0" fill="none" stroke="#5c5c5c" stroke-width="1.0" stroke-linejoin="round" stroke-linecap="round" />
<polyline points="636.4,404.6 648.8,429.4 647.6,441 642.1,441 641.3,432.7 619,433.6 618.2,446.8 593.4,441 587.6,439.3 587.6,453.4 591.7,454.2 592.3,454.9 591.5,473.1 596.5,492.9 597.3,506.1 609.7,506.1 610.5,494.5 623.1,492.2 624.8,500.5 634.7,501.3 635.5,505.5 652,505.5 652.8,521.5 659.4,518.2 666,526.4 666.9,534.7 668.5,535.5 670.2,566.1 684.2,565.3 690.8,559.5 708.2,559.5 708.2,547.1 704,546.3 700,538 692.5,535.5 686.7,538 682.6,529.8 680,531.4 680,524.8 690,524.8 684.2,516.5 689.2,517.4 671,508.3 671.8,500 672,490" fill="none" stroke="#5c5c5c" stroke-width="1.0" stroke-linejoin="round" stroke-linecap="round" />
<polyline points="700,453.4 674.4,470 683.5,480.7 671.9,485.6 671,492.2 673.6,498.8 672,508.8 685.9,515.7 705.7,529.8 715.6,533 725.5,548 724.7,567.8 709,569.4 704,576 700,581 698.3,591.7 706.5,590 705.7,598.3 700,601.7 695.8,600 694.1,595.9 680.9,595 672.6,599.2 676.8,603.3 676,609.1" fill="none" stroke="#5c5c5c" stroke-width="1.0" stroke-linejoin="round" stroke-linecap="round" />
<polyline points="690,460 709.8,447.6 705.7,439.3 734.6,437.7 736.3,445.1 776,452.6 771.8,468.3 779.3,470.7 784.2,470 790.8,482.3 812.3,479.8 822.2,479 835.5,500.5 838.8,503.8 830.5,507 829.7,520 830.3,548 859.3,542.1 856,533 855.1,519.8 854.3,511.6" fill="none" stroke="#5c5c5c" stroke-width="1.0" stroke-linejoin="round" stroke-linecap="round" />
<polyline points="864.2,510.7 865.9,519.8 876.6,520.7 877.4,538 908.8,530.6" fill="none" stroke="#5c5c5c" stroke-width="1.0" stroke-linejoin="round" stroke-linecap="round" />
<polyline points="722.2,472.4 723,483 702.4,482.3 703.2,495.5 709.8,501.3 721.4,502.1 725.5,520 720.6,501.7" fill="none" stroke="#5c5c5c" stroke-width="1.0" stroke-linejoin="round" stroke-linecap="round" />
<polyline points="722.2,474 736.3,474 752.8,483 767.7,482.3 759.4,498.8 756,520 752,531.4 746.2,531.4" fill="none" stroke="#5c5c5c" stroke-width="1.0" stroke-linejoin="round" stroke-linecap="round" />
<polyline points="707.4,500 720.6,501.7 725.5,508.3 723.9,521.5 732.1,521.5 737.1,533 732.1,534.7 740.4,549.6 742,556.2" fill="none" stroke="#5c5c5c" stroke-width="1.0" stroke-linejoin="round" stroke-linecap="round" />
<polyline points="747.9,531.4 748.7,561.2 750.3,566.1 763.5,614 771.8,615.7 771.8,622.3" fill="none" stroke="#5c5c5c" stroke-width="1.0" stroke-linejoin="round" stroke-linecap="round" />
<polyline points="761.9,543.8 770.2,543.8 771.8,554.5 773.5,562.8 781.7,567.8 782.6,556.2 778.4,551.2 779.3,534.7 790,528.9 810.5,516.5 815.5,516.5 811.3,535.5 828.7,530.6" fill="none" stroke="#5c5c5c" stroke-width="1.0" stroke-linejoin="round" stroke-linecap="round" />
<polyline points="815.5,516.5 780,533.9 777.4,544.6 782.4,556.2 782.4,567.8 771.7,554.5 771.7,544.6" fill="none" stroke="#5c5c5c" stroke-width="1.0" stroke-linejoin="round" stroke-linecap="round" />
<polyline points="770,615.7 770,622.3 780.7,623.1 785.7,627.3 780.7,630.6 780.7,635.5" fill="none" stroke="#5c5c5c" stroke-width="1.0" stroke-linejoin="round" stroke-linecap="round" />
<circle cx="683.4" cy="448.4" r="14" fill="url(#cls)"/>
<circle cx="849.3" cy="510.7" r="14.5" fill="url(#cls)"/>
<circle cx="846.9" cy="593.4" r="29.5" fill="url(#clb)"/>
<text x="683" y="452.7" font-size="11.7" fill="#ffffff" text-anchor="middle" textLength="23.2" lengthAdjust="spacingAndGlyphs" stroke="#ffffff" stroke-width="2.4" stroke-linejoin="round" opacity="1">3.06</text><text x="683" y="452.7" font-size="11.7" fill="#111" text-anchor="middle" textLength="23.2" lengthAdjust="spacingAndGlyphs">3.06</text>
<text x="849.8" y="514.9" font-size="11.7" fill="#ffffff" text-anchor="middle" textLength="23" lengthAdjust="spacingAndGlyphs" stroke="#ffffff" stroke-width="2.4" stroke-linejoin="round" opacity="1">3.49</text><text x="849.8" y="514.9" font-size="11.7" fill="#111" text-anchor="middle" textLength="23" lengthAdjust="spacingAndGlyphs">3.49</text>
<text x="847.6" y="562" font-size="12" fill="#333" font-weight="bold" text-anchor="middle" textLength="84" lengthAdjust="spacingAndGlyphs" stroke="#333" stroke-width="2.2" stroke-linejoin="round" opacity="1">9 Site Average</text><text x="847.6" y="562" font-size="12" fill="#ececec" font-weight="bold" text-anchor="middle" textLength="84" lengthAdjust="spacingAndGlyphs">9 Site Average</text>
<text x="847.6" y="596.7" font-size="11.5" fill="#444" font-weight="bold" text-anchor="middle" textLength="23" lengthAdjust="spacingAndGlyphs" stroke="#444" stroke-width="2.2" stroke-linejoin="round" opacity="1">4.08</text><text x="847.6" y="596.7" font-size="11.5" fill="#ffffff" font-weight="bold" text-anchor="middle" textLength="23" lengthAdjust="spacingAndGlyphs">4.08</text>
<text x="697" y="372.5" font-size="11" fill="#ffffff" text-anchor="middle" stroke="#ffffff" stroke-width="1.6" stroke-linejoin="round" opacity="0.75">The</text><text x="697" y="372.5" font-size="11" fill="#6a6a6a" text-anchor="middle">The</text>
<text x="697" y="384.5" font-size="11" fill="#ffffff" text-anchor="middle" stroke="#ffffff" stroke-width="1.6" stroke-linejoin="round" opacity="0.75">Woodlands</text><text x="697" y="384.5" font-size="11" fill="#6a6a6a" text-anchor="middle">Woodlands</text>
<text x="785" y="459.2" font-size="11" fill="#ffffff" textLength="49" lengthAdjust="spacingAndGlyphs" stroke="#ffffff" stroke-width="1.6" stroke-linejoin="round" opacity="0.75">Atascocita</text><text x="785" y="459.2" font-size="11" fill="#6a6a6a" textLength="49" lengthAdjust="spacingAndGlyphs">Atascocita</text>
<text x="710.7" y="559.2" font-size="14.5" fill="#ffffff" textLength="59.5" lengthAdjust="spacingAndGlyphs" stroke="#ffffff" stroke-width="2.5" stroke-linejoin="round" opacity="1">Houston</text><text x="710.7" y="559.2" font-size="14.5" fill="#333" textLength="59.5" lengthAdjust="spacingAndGlyphs">Houston</text>
<text x="782.9" y="586.8" font-size="11" fill="#ffffff" textLength="45" lengthAdjust="spacingAndGlyphs" stroke="#ffffff" stroke-width="1.6" stroke-linejoin="round" opacity="0.75">Pasadena</text><text x="782.9" y="586.8" font-size="11" fill="#6a6a6a" textLength="45" lengthAdjust="spacingAndGlyphs">Pasadena</text>
<text x="868.7" y="570.2" font-size="11" fill="#ffffff" textLength="40" lengthAdjust="spacingAndGlyphs" stroke="#ffffff" stroke-width="1.6" stroke-linejoin="round" opacity="0.5">Baytown</text><text x="868.7" y="570.2" font-size="11" fill="#7a7a7a" textLength="40" lengthAdjust="spacingAndGlyphs">Baytown</text>
<text x="620.8" y="628" font-size="11" fill="#ffffff" textLength="52.9" lengthAdjust="spacingAndGlyphs" stroke="#ffffff" stroke-width="1.6" stroke-linejoin="round" opacity="0.75">Sugar Land</text><text x="620.8" y="628" font-size="11" fill="#6a6a6a" textLength="52.9" lengthAdjust="spacingAndGlyphs">Sugar Land</text>
<text x="552.7" y="644.7" font-size="11" fill="#ffffff" textLength="50.3" lengthAdjust="spacingAndGlyphs" stroke="#ffffff" stroke-width="1.6" stroke-linejoin="round" opacity="0.75">Rosenberg</text><text x="552.7" y="644.7" font-size="11" fill="#6a6a6a" textLength="50.3" lengthAdjust="spacingAndGlyphs">Rosenberg</text>
<text x="750.2" y="641.9" font-size="11" fill="#ffffff" textLength="41.6" lengthAdjust="spacingAndGlyphs" stroke="#ffffff" stroke-width="1.6" stroke-linejoin="round" opacity="0.75">Pearland</text><text x="750.2" y="641.9" font-size="11" fill="#6a6a6a" textLength="41.6" lengthAdjust="spacingAndGlyphs">Pearland</text>
<text x="814.2" y="666" font-size="11" fill="#ffffff" textLength="55" lengthAdjust="spacingAndGlyphs" stroke="#ffffff" stroke-width="1.6" stroke-linejoin="round" opacity="0.75">League City</text><text x="814.2" y="666" font-size="11" fill="#6a6a6a" textLength="55" lengthAdjust="spacingAndGlyphs">League City</text>
<text x="889.5" y="718.7" font-size="11" fill="#ffffff" textLength="47.3" lengthAdjust="spacingAndGlyphs" stroke="#ffffff" stroke-width="1.6" stroke-linejoin="round" opacity="0.75">Texas City</text><text x="889.5" y="718.7" font-size="11" fill="#6a6a6a" textLength="47.3" lengthAdjust="spacingAndGlyphs">Texas City</text>
</g>
<rect x="910.2" y="307.7" width="32.2" height="32.2" fill="#fff" rx="3" filter="url(#btnsh)"/>
<rect x="951.2" y="307.7" width="64.4" height="32.2" fill="#fff" rx="3" filter="url(#btnsh)"/>
<circle cx="924.6" cy="322.3" r="5" fill="none" stroke="#555" stroke-width="1.3"/>
<line x1="928.3" y1="326" x2="932.3" y2="330" stroke="#555" stroke-width="1.4"/>
<rect x="959.3" y="316.90000000000003" width="2.4" height="2.4" fill="none" stroke="#555" stroke-width="0.8"/>
<rect x="964.8" y="317.6" width="9" height="1.1" fill="#555" />
<rect x="959.3" y="321.0" width="2.4" height="2.4" fill="none" stroke="#555" stroke-width="0.8"/>
<rect x="964.8" y="321.7" width="9" height="1.1" fill="#555" />
<rect x="959.3" y="325.0" width="2.4" height="2.4" fill="none" stroke="#555" stroke-width="0.8"/>
<rect x="964.8" y="325.7" width="9" height="1.1" fill="#555" />
<path d="M959.3,331.3 L960.5,329 L961.7,331.3Z" fill="#555"/>
<rect x="964.8" y="329.8" width="9" height="1.1" fill="#555" />
<path d="M993.4,322 L1000,318.2 L1006.6,322 L1000,325.8Z" fill="none" stroke="#555" stroke-width="1.1"/>
<path d="M993.4,325 L1000,328.8 L1006.6,325" fill="none" stroke="#555" stroke-width="1.1"/>
<path d="M993.4,328 L1000,331.8 L1006.6,328" fill="none" stroke="#555" stroke-width="1.1"/>
<rect x="983.3" y="686" width="32.3" height="32" fill="#fff" filter="url(#btnsh)"/>
<circle cx="999.9" cy="702.2" r="5.2" fill="none" stroke="#444" stroke-width="1.1"/>
<path d="M999.9,694.8 v2.2 M999.9,707.4 v2.2 M992.5,702.2 h2.2 M1005.1,702.2 h2.2" stroke="#444" stroke-width="1.1"/>
<rect x="413" y="733" width="617" height="15" fill="#fff" />
<rect x="413" y="747.5" width="617" height="1.2" fill="#dcdcdc" />
<text x="418.6" y="744.6" font-size="12" fill="#323232" textLength="499" lengthAdjust="spacingAndGlyphs">City of Houston, Texas Parks &amp; Wildlife, CONANP, Esri, TomTom, Garmin, Foursquare, Safe…</text>
<text x="937.9" y="744.6" font-size="12" fill="#323232" textLength="87.3" lengthAdjust="spacingAndGlyphs">Powered by Esri</text>
<text x="505" y="267.5" font-size="32" fill="#1a1a1a" font-weight="bold" textLength="407" lengthAdjust="spacingAndGlyphs">Latest PM 2.5 Levels (µg/m</text>
<text x="913.3" y="252.7" font-size="20.5" fill="#1a1a1a" font-weight="bold" textLength="11.4" lengthAdjust="spacingAndGlyphs">3</text>
<text x="926.3" y="267.5" font-size="32" fill="#1a1a1a" font-weight="bold" textLength="10.6" lengthAdjust="spacingAndGlyphs">)</text>
<text x="668.4" y="775.1" font-size="14" fill="#1c4e6e" font-weight="bold" textLength="102.9" lengthAdjust="spacingAndGlyphs">Air Quality Index</text>
<rect x="617.4" y="791" width="38.199999999999974" height="21.3" fill="#2ac84a" />
<rect x="655.3" y="791" width="41.600000000000065" height="21.3" fill="#fde830" />
<rect x="696.6" y="791" width="39.90000000000002" height="21.3" fill="#fdbf32" />
<rect x="736.2" y="791" width="39.8" height="21.3" fill="#e51b25" />
<rect x="775.7" y="791" width="38.899999999999906" height="21.3" fill="#7a0019" />
<text x="622.6" y="822.6" font-size="9.5" fill="#222" font-weight="bold" textLength="23.1" lengthAdjust="spacingAndGlyphs">Good</text>
<text x="653.6" y="823" font-size="9.5" fill="#222" font-weight="bold" textLength="40.2" lengthAdjust="spacingAndGlyphs">Moderate</text>
<text x="716.4" y="821.3" font-size="6.6" fill="#222" font-weight="bold" text-anchor="middle" textLength="31" lengthAdjust="spacingAndGlyphs">Unhealthy</text>
<text x="716.4" y="830" font-size="6.6" fill="#222" font-weight="bold" text-anchor="middle" textLength="38" lengthAdjust="spacingAndGlyphs">for Sensitive</text>
<text x="716.4" y="838.8" font-size="6.6" fill="#222" font-weight="bold" text-anchor="middle" textLength="20.5" lengthAdjust="spacingAndGlyphs">Groups</text>
<text x="739" y="821.2" font-size="9.5" fill="#222" font-weight="bold" textLength="43" lengthAdjust="spacingAndGlyphs">Unhealthy</text>
<text x="788.8" y="820.8" font-size="9.5" fill="#222" font-weight="bold" textLength="18.9" lengthAdjust="spacingAndGlyphs">Very</text>
<text x="779" y="833.2" font-size="9.5" fill="#222" font-weight="bold" textLength="43.2" lengthAdjust="spacingAndGlyphs">Unhealthy</text>
<text x="1056.8" y="299" font-size="19.3" fill="#1f1f1f" textLength="189.8" lengthAdjust="spacingAndGlyphs">Average PM 2.5 (µg/m</text>
<text x="1246.8" y="290.3" font-size="8.3" fill="#1f1f1f" font-weight="bold" textLength="5.8" lengthAdjust="spacingAndGlyphs">3</text>
<text x="1252.6" y="299" font-size="19.3" fill="#1f1f1f" textLength="6.4" lengthAdjust="spacingAndGlyphs">)</text>
<text x="1059" y="324.7" font-size="16.4" fill="#1f1f1f" font-weight="bold" textLength="199" lengthAdjust="spacingAndGlyphs">(Based on Date Selection)</text>
<text x="1056.6" y="432.5" font-size="104" fill="#35b935" textLength="201.4" lengthAdjust="spacingAndGlyphs">7.35</text>
<text x="1410.5" y="250.6" font-size="14" fill="#1f1f1f" font-weight="bold" text-anchor="middle" textLength="179" lengthAdjust="spacingAndGlyphs">Sensor Locations in Current</text>
<text x="1410.3" y="268.3" font-size="14" fill="#1f1f1f" font-weight="bold" text-anchor="middle" textLength="59.9" lengthAdjust="spacingAndGlyphs">Selection</text>
<clipPath id="lclip"><rect x="1286" y="280" width="249" height="230.5"/></clipPath><g clip-path="url(#lclip)">
<rect x="1286" y="279.8" width="242.4" height="25.599999999999966" fill="#ffffff" />
<rect x="1286" y="279.2" width="242.4" height="1.2" fill="#d2d2d2" />
<text x="1290.9" y="296.6" font-size="12.3" fill="#2a2a2a">Armand Bayou Park</text>
<rect x="1286" y="305.4" width="242.4" height="25.30000000000001" fill="#f7f7f7" />
<rect x="1286" y="304.79999999999995" width="242.4" height="1.2" fill="#d2d2d2" />
<text x="1290.9" y="322.2" font-size="12.3" fill="#2a2a2a">Bay Area Park</text>
<rect x="1286" y="330.7" width="242.4" height="25.30000000000001" fill="#ffffff" />
<rect x="1286" y="330.09999999999997" width="242.4" height="1.2" fill="#d2d2d2" />
<text x="1290.9" y="347.5" font-size="12.3" fill="#2a2a2a">Bayland Park</text>
<rect x="1286" y="356" width="242.4" height="25.600000000000023" fill="#f7f7f7" />
<rect x="1286" y="355.4" width="242.4" height="1.2" fill="#d2d2d2" />
<text x="1290.9" y="372.8" font-size="12.3" fill="#2a2a2a">Bayport Pump Station</text>
<rect x="1286" y="381.6" width="242.4" height="25.299999999999955" fill="#ffffff" />
<rect x="1286" y="381.0" width="242.4" height="1.2" fill="#d2d2d2" />
<text x="1290.9" y="398.40000000000003" font-size="12.3" fill="#2a2a2a">Baytown Park</text>
<rect x="1286" y="406.9" width="242.4" height="25.30000000000001" fill="#f7f7f7" />
<rect x="1286" y="406.29999999999995" width="242.4" height="1.2" fill="#d2d2d2" />
<text x="1290.9" y="423.7" font-size="12.3" fill="#2a2a2a">Boyce-Dorian Park</text>
<rect x="1286" y="432.2" width="242.4" height="25.600000000000023" fill="#ffffff" />
<rect x="1286" y="431.59999999999997" width="242.4" height="1.2" fill="#d2d2d2" />
<text x="1290.9" y="449.0" font-size="12.3" fill="#2a2a2a">Fairmont Park</text>
<rect x="1286" y="457.8" width="242.4" height="25.30000000000001" fill="#f7f7f7" />
<rect x="1286" y="457.2" width="242.4" height="1.2" fill="#d2d2d2" />
<text x="1290.9" y="474.6" font-size="12.3" fill="#2a2a2a">Hartman Park</text>
<rect x="1286" y="483.1" width="242.4" height="25.0" fill="#ffffff" />
<rect x="1286" y="482.5" width="242.4" height="1.2" fill="#d2d2d2" />
<text x="1290.9" y="499.90000000000003" font-size="12.3" fill="#2a2a2a">John Phelps</text>
<rect x="1286" y="508.1" width="242.4" height="25.299999999999955" fill="#f7f7f7" />
<rect x="1286" y="507.5" width="242.4" height="1.2" fill="#d2d2d2" />
<rect x="1528.4" y="280" width="7" height="231" fill="#dcdcdc" />
<rect x="1528.4" y="280" width="7" height="124.5" fill="#c1c1c1" />
</g>
<text x="1108.8" y="544.5" font-size="26.9" fill="#1a1a1a" font-weight="bold" textLength="332.5" lengthAdjust="spacingAndGlyphs">Hourly PM 2.5 Chart (µg/m</text>
<text x="1442.6" y="531.7" font-size="11" fill="#1a1a1a" font-weight="bold" textLength="7.2" lengthAdjust="spacingAndGlyphs">3</text>
<text x="1448.3" y="544.5" font-size="26.9" fill="#1a1a1a" font-weight="bold" textLength="9.2" lengthAdjust="spacingAndGlyphs">)</text>
<rect x="1092" y="819.5" width="248.29999999999995" height="1" fill="#efefef" />
<text x="1087.6" y="821.6" font-size="11.5" fill="#3a3a3a" text-anchor="end">0</text>
<rect x="1092" y="771.8" width="248.29999999999995" height="1" fill="#efefef" />
<text x="1087.6" y="773.9" font-size="11.5" fill="#3a3a3a" text-anchor="end">50</text>
<rect x="1092" y="724.1" width="248.29999999999995" height="1" fill="#efefef" />
<text x="1087.6" y="726.2" font-size="11.5" fill="#3a3a3a" text-anchor="end">100</text>
<rect x="1092" y="676.4" width="248.29999999999995" height="1" fill="#efefef" />
<text x="1087.6" y="678.5" font-size="11.5" fill="#3a3a3a" text-anchor="end">150</text>
<rect x="1092" y="628.7" width="248.29999999999995" height="1" fill="#efefef" />
<text x="1087.6" y="630.8000000000001" font-size="11.5" fill="#3a3a3a" text-anchor="end">200</text>
<rect x="1092" y="581.0" width="248.29999999999995" height="1" fill="#efefef" />
<text x="1087.6" y="583.1" font-size="11.5" fill="#3a3a3a" text-anchor="end">250</text>
<rect x="1119.1" y="581.5" width="1" height="244.5" fill="#ececec" />
<rect x="1208.9" y="581.5" width="1" height="244.5" fill="#ececec" />
<rect x="1298.5" y="581.5" width="1" height="244.5" fill="#ececec" />
<rect x="1097.1000000000001" y="581.5" width="1.2" height="239" fill="#d8d8d8" />
<rect x="1092" y="819.4" width="248.29999999999995" height="1.2" fill="#d8d8d8" />
<text x="1120.5" y="839.8" font-size="11.5" fill="#333" text-anchor="middle" textLength="33.6" lengthAdjust="spacingAndGlyphs">Jun 24</text>
<text x="1209.4" y="839.8" font-size="11.5" fill="#333" text-anchor="middle" textLength="30" lengthAdjust="spacingAndGlyphs">Jul 01</text>
<text x="1299" y="839.8" font-size="11.5" fill="#333" text-anchor="middle" textLength="31" lengthAdjust="spacingAndGlyphs">Jul 08</text>
<text x="1052.6" y="701.3" font-size="11.5" fill="#222" font-weight="bold" text-anchor="middle" textLength="35.4" lengthAdjust="spacingAndGlyphs" transform="rotate(-90 1052.6 701.3)">PM 2.5</text>
<clipPath id="cclip"><rect x="1097" y="575" width="244" height="246"/></clipPath><g clip-path="url(#cclip)">
<polyline points="1098.0,817.4 1098.8,816.8 1099.6,817.3 1100.4,818.0 1101.2,818.7 1102.0,818.4 1102.8,818.9 1103.6,819.4 1104.4,818.8 1105.2,818.4 1106.0,818.0 1106.8,818.5 1107.6,818.4 1108.4,818.3 1109.2,819.1 1110.0,818.4 1110.8,818.1 1111.6,816.7 1112.4,817.1 1113.2,817.6 1114.0,817.1 1114.8,817.4 1115.6,817.1 1116.4,817.7 1117.2,817.8 1118.0,817.3 1118.8,817.2 1119.6,817.5 1120.4,818.4 1121.2,818.0 1122.0,818.0 1122.8,817.6 1123.6,817.7 1124.4,817.2 1125.2,817.6 1126.0,817.7 1126.8,817.5 1127.6,818.3 1128.4,818.5 1129.2,818.6 1130.0,817.3 1130.8,817.6 1131.6,817.5 1132.4,817.4 1133.2,817.8 1134.0,818.8 1134.8,818.0 1135.6,818.3 1136.4,817.8 1137.2,818.7 1138.0,818.7 1138.8,817.7 1139.6,817.1 1140.4,818.2 1141.2,818.9 1142.0,818.6 1142.8,818.0 1143.6,817.9 1144.4,817.8 1145.2,818.5 1146.0,818.0 1146.8,817.4 1147.6,817.9 1148.4,818.8 1149.2,819.0 1150.0,818.2 1150.8,819.1 1151.6,818.8 1152.4,819.1 1153.2,818.8 1154.0,818.6 1154.8,818.4 1155.6,817.4 1156.4,817.4 1157.2,816.9 1158.0,817.5 1158.8,818.0 1159.6,817.8 1160.4,819.6 1161.2,819.0 1162.0,818.5 1162.8,819.1 1163.6,818.4 1164.4,818.6 1165.2,819.7 1166.0,819.2 1166.8,819.3 1167.6,819.1 1168.4,818.8 1169.2,817.8 1170.0,817.9 1170.8,816.8 1171.6,816.0 1172.4,816.7 1173.2,815.4 1174.0,816.0 1174.8,815.4 1175.6,816.0 1176.4,816.2 1177.2,816.1 1178.0,814.6 1178.8,814.5 1179.6,815.1 1180.4,815.3 1181.2,815.9 1182.0,815.7 1182.8,815.8 1183.6,815.2 1184.4,816.0 1185.2,815.9 1186.0,816.1 1186.8,816.2 1187.6,815.4 1188.4,815.2 1189.2,814.9 1190.0,814.4 1190.8,814.0 1191.6,815.3 1192.4,815.0 1193.2,816.1 1194.0,815.8 1194.8,814.5 1195.6,814.9 1196.4,815.2 1197.2,815.1 1198.0,815.2 1198.8,815.2 1199.6,815.6 1200.4,814.9 1201.2,814.5 1202.0,814.9 1202.8,814.9 1203.6,814.6 1204.4,814.3 1205.2,815.6 1206.0,816.2 1206.8,817.1 1207.6,818.1 1208.4,818.4 1209.2,817.7 1210.0,817.3 1210.8,817.5 1211.6,818.1 1212.4,817.9 1213.2,817.0 1214.0,816.7 1214.8,817.6 1215.6,815.6 1216.4,815.1 1217.2,814.7 1218.0,813.6 1218.8,813.1 1219.6,812.3 1220.4,811.6 1221.2,811.4 1222.0,811.0 1222.8,811.9 1223.6,812.7 1224.4,812.3 1225.2,810.8 1226.0,811.2 1226.8,812.3 1227.6,812.2 1228.4,811.5 1229.2,812.4 1230.0,811.9 1230.8,812.5 1231.6,811.7 1232.4,811.5 1233.2,811.7 1234.0,810.8 1234.8,811.7 1235.6,812.3 1236.4,811.3 1237.2,812.2 1238.0,811.0 1238.8,811.6 1239.6,812.5 1240.4,812.4 1241.2,812.3 1242.0,812.2 1242.8,812.4 1243.6,811.8 1244.4,813.3 1245.2,813.3 1246.0,813.1 1246.8,811.7 1247.6,813.1 1248.4,813.0 1249.2,813.4 1250.0,813.4 1250.8,814.9 1251.6,815.9 1252.4,816.0 1253.2,817.2 1254.0,817.4 1254.8,817.0 1255.6,816.2 1256.4,816.4 1257.2,815.6 1258.0,816.4 1258.8,815.3 1259.6,815.5 1260.4,815.9 1261.2,815.8 1262.0,815.5 1262.8,814.8 1263.6,815.4 1264.4,815.9 1265.2,815.7 1266.0,816.4 1266.8,817.3 1267.6,816.4 1268.4,816.5 1269.2,815.7 1270.0,816.5 1270.8,818.0 1271.6,817.1 1272.4,816.7 1273.2,815.6 1274.0,815.5 1274.8,815.6 1275.6,815.5 1276.4,816.0 1277.2,816.0 1278.0,816.9 1278.8,816.3 1279.6,816.7 1280.4,816.8 1281.2,816.1 1282.0,815.6 1282.8,816.4 1283.6,815.2 1284.4,815.9 1285.2,815.5 1286.0,815.3 1286.8,815.5 1287.6,815.7 1288.4,814.8 1289.2,814.9 1290.0,815.1 1290.8,816.6 1291.6,816.9 1292.4,815.9 1293.2,815.9 1294.0,816.6 1294.8,817.5 1295.6,817.9" fill="none" stroke="#3ae8d0" stroke-width="1.05" stroke-linejoin="round"/>
<polyline points="1098.0,814.0 1098.8,815.5 1099.6,815.4 1100.4,815.6 1101.2,815.0 1102.0,816.8 1102.8,816.9 1103.6,817.3 1104.4,817.9 1105.2,818.0 1106.0,817.7 1106.8,817.4 1107.6,817.7 1108.4,816.7 1109.2,817.0 1110.0,819.7 1110.8,817.2 1111.6,817.1 1112.4,817.4 1113.2,816.7 1114.0,816.3 1114.8,816.2 1115.6,817.0 1116.4,816.5 1117.2,817.8 1118.0,815.8 1118.8,817.1 1119.6,816.9 1120.4,816.6 1121.2,816.2 1122.0,816.4 1122.8,815.9 1123.6,819.4 1124.4,818.3 1125.2,817.7 1126.0,817.6 1126.8,815.8 1127.6,817.0 1128.4,816.8 1129.2,818.6 1130.0,817.5 1130.8,818.6 1131.6,819.2 1132.4,815.9 1133.2,815.5 1134.0,815.9 1134.8,816.0 1135.6,817.5 1136.4,818.1 1137.2,817.1 1138.0,818.8 1138.8,817.6 1139.6,818.8 1140.4,817.8 1141.2,818.3 1142.0,815.9 1142.8,815.2 1143.6,816.2 1144.4,818.1 1145.2,818.2 1146.0,817.6 1146.8,818.1 1147.6,817.2 1148.4,816.0 1149.2,816.2 1150.0,816.7 1150.8,815.9 1151.6,816.4 1152.4,815.6 1153.2,816.3 1154.0,814.8 1154.8,815.8 1155.6,817.1 1156.4,816.7 1157.2,817.2 1158.0,817.8 1158.8,817.4 1159.6,816.3 1160.4,818.4 1161.2,817.7 1162.0,817.4 1162.8,817.1 1163.6,816.1 1164.4,817.5 1165.2,816.5 1166.0,816.7 1166.8,816.5 1167.6,816.7 1168.4,816.9 1169.2,817.2 1170.0,816.5 1170.8,813.4 1171.6,812.5 1172.4,812.1 1173.2,812.2 1174.0,813.2 1174.8,812.8 1175.6,811.1 1176.4,813.3 1177.2,812.6 1178.0,812.0 1178.8,812.4 1179.6,812.1 1180.4,811.4 1181.2,810.1 1182.0,810.3 1182.8,810.0 1183.6,811.1 1184.4,811.3 1185.2,812.0 1186.0,812.3 1186.8,813.2 1187.6,812.7 1188.4,811.6 1189.2,812.5 1190.0,812.7 1190.8,812.4 1191.6,812.8 1192.4,812.2 1193.2,812.4 1194.0,813.9 1194.8,814.7 1195.6,813.5 1196.4,812.9 1197.2,812.1 1198.0,812.4 1198.8,812.6 1199.6,814.4 1200.4,812.7 1201.2,813.8 1202.0,812.7 1202.8,814.1 1203.6,814.4 1204.4,813.9 1205.2,815.2 1206.0,816.3 1206.8,815.4 1207.6,815.1 1208.4,815.2 1209.2,815.9 1210.0,816.8 1210.8,817.1 1211.6,817.2 1212.4,816.9 1213.2,815.9 1214.0,816.2 1214.8,816.9 1215.6,815.0 1216.4,812.0 1217.2,811.2 1218.0,810.7 1218.8,810.4 1219.6,809.9 1220.4,810.0 1221.2,809.1 1222.0,808.9 1222.8,812.2 1223.6,811.6 1224.4,808.4 1225.2,810.4 1226.0,810.3 1226.8,809.4 1227.6,809.8 1228.4,808.8 1229.2,810.7 1230.0,811.8 1230.8,811.4 1231.6,811.7 1232.4,812.2 1233.2,811.0 1234.0,810.5 1234.8,810.5 1235.6,810.9 1236.4,810.5 1237.2,810.6 1238.0,811.2 1238.8,810.4 1239.6,810.1 1240.4,810.2 1241.2,809.6 1242.0,811.0 1242.8,810.9 1243.6,811.2 1244.4,809.7 1245.2,809.5 1246.0,807.9 1246.8,807.5 1247.6,809.0 1248.4,810.6 1249.2,810.1 1250.0,810.5 1250.8,812.9 1251.6,815.2 1252.4,815.0 1253.2,815.3 1254.0,815.3 1254.8,815.4 1255.6,815.8 1256.4,817.3 1257.2,816.3 1258.0,816.1 1258.8,815.9 1259.6,814.3 1260.4,814.4 1261.2,812.9 1262.0,813.3 1262.8,813.1 1263.6,813.1 1264.4,812.8 1265.2,814.6 1266.0,813.4 1266.8,813.7 1267.6,814.8 1268.4,814.0 1269.2,813.8 1270.0,812.8 1270.8,812.7 1271.6,813.0 1272.4,815.0 1273.2,813.2 1274.0,812.2 1274.8,812.3 1275.6,812.7 1276.4,812.2 1277.2,813.8 1278.0,813.4 1278.8,813.7 1279.6,814.9 1280.4,814.3 1281.2,814.0 1282.0,812.5 1282.8,812.3 1283.6,814.6 1284.4,816.3 1285.2,815.6 1286.0,815.2 1286.8,815.7 1287.6,816.5 1288.4,815.8 1289.2,816.3 1290.0,816.1 1290.8,814.6 1291.6,814.2 1292.4,815.0 1293.2,815.7 1294.0,815.3" fill="none" stroke="#f7a035" stroke-width="1.05" stroke-linejoin="round"/>
<polyline points="1098.0,817.1 1098.8,816.0 1099.6,817.3 1100.4,816.4 1101.2,816.9 1102.0,817.2 1102.8,815.6 1103.6,816.1 1104.4,816.5 1105.2,816.1 1106.0,815.6 1106.8,816.2 1107.6,816.1 1108.4,817.3 1109.2,817.6 1110.0,817.8 1110.8,818.7 1111.6,819.3 1112.4,819.7 1113.2,818.9 1114.0,818.3 1114.8,818.1 1115.6,817.7 1116.4,818.6 1117.2,818.1 1118.0,817.5 1118.8,816.7 1119.6,817.6 1120.4,817.8 1121.2,819.2 1122.0,818.8 1122.8,819.7 1123.6,819.7 1124.4,817.7 1125.2,819.4 1126.0,817.8 1126.8,817.3 1127.6,817.5 1128.4,816.9 1129.2,816.6 1130.0,815.9 1130.8,816.6 1131.6,817.3 1132.4,817.8 1133.2,818.4 1134.0,817.9 1134.8,818.3 1135.6,816.9 1136.4,818.6 1137.2,819.0 1138.0,819.0 1138.8,819.7 1139.6,817.1 1140.4,819.2 1141.2,818.6 1142.0,818.5 1142.8,816.5 1143.6,818.5 1144.4,817.0 1145.2,817.7 1146.0,817.6 1146.8,818.0 1147.6,817.1 1148.4,818.1 1149.2,817.8 1150.0,817.2 1150.8,815.6 1151.6,818.3 1152.4,816.5 1153.2,816.0 1154.0,816.8 1154.8,816.7 1155.6,817.3 1156.4,815.8 1157.2,816.2 1158.0,816.7 1158.8,817.1 1159.6,817.3 1160.4,817.4 1161.2,818.0 1162.0,815.9 1162.8,818.0 1163.6,819.7 1164.4,818.8 1165.2,818.3 1166.0,817.5 1166.8,817.5 1167.6,817.5 1168.4,817.1 1169.2,816.3 1170.0,817.0 1170.8,816.2 1171.6,813.8 1172.4,813.5 1173.2,814.7 1174.0,812.5 1174.8,812.6 1175.6,813.7 1176.4,815.0 1177.2,814.4 1178.0,815.1 1178.8,815.7 1179.6,816.2 1180.4,815.9 1181.2,814.3 1182.0,814.7 1182.8,815.7 1183.6,814.6 1184.4,814.4 1185.2,813.6 1186.0,812.9 1186.8,813.6 1187.6,814.0 1188.4,814.1 1189.2,815.2 1190.0,814.2 1190.8,813.1 1191.6,813.4 1192.4,814.0 1193.2,814.3 1194.0,815.0 1194.8,815.4 1195.6,815.3 1196.4,815.6 1197.2,815.4 1198.0,816.3 1198.8,815.2 1199.6,814.8 1200.4,815.6 1201.2,817.0 1202.0,815.9 1202.8,814.3 1203.6,814.9 1204.4,815.1 1205.2,816.4 1206.0,816.1 1206.8,817.3 1207.6,816.4 1208.4,817.0 1209.2,816.2 1210.0,816.6 1210.8,817.0 1211.6,818.3 1212.4,818.4 1213.2,818.1 1214.0,817.2 1214.8,816.9 1215.6,815.3 1216.4,813.4 1217.2,811.8 1218.0,811.8 1218.8,812.0 1219.6,812.1 1220.4,811.1 1221.2,810.8 1222.0,811.8 1222.8,811.3 1223.6,811.8 1224.4,812.3 1225.2,810.9 1226.0,810.4 1226.8,811.4 1227.6,811.3 1228.4,810.9 1229.2,811.7 1230.0,811.7 1230.8,811.0 1231.6,812.7 1232.4,811.9 1233.2,811.1 1234.0,810.8 1234.8,812.2 1235.6,811.6 1236.4,812.3 1237.2,811.4 1238.0,810.9 1238.8,810.9 1239.6,811.8 1240.4,812.1 1241.2,811.1 1242.0,812.0 1242.8,811.3 1243.6,810.9 1244.4,811.4 1245.2,809.3 1246.0,810.1 1246.8,808.8 1247.6,811.6 1248.4,813.4 1249.2,811.8 1250.0,811.1 1250.8,813.8 1251.6,815.2 1252.4,817.6 1253.2,817.9 1254.0,818.5 1254.8,818.2 1255.6,816.2 1256.4,815.8 1257.2,815.2 1258.0,815.8 1258.8,816.0 1259.6,815.6 1260.4,815.7 1261.2,814.4 1262.0,815.5 1262.8,813.8 1263.6,815.2 1264.4,814.3 1265.2,815.3 1266.0,813.9 1266.8,814.3 1267.6,815.9 1268.4,816.6 1269.2,818.2 1270.0,819.5 1270.8,819.7 1271.6,818.5 1272.4,819.4 1273.2,819.7 1274.0,819.5 1274.8,817.7 1275.6,819.7 1276.4,819.3 1277.2,819.6 1278.0,819.0 1278.8,819.7 1279.6,819.7 1280.4,818.8 1281.2,817.6 1282.0,816.9 1282.8,818.6 1283.6,818.8 1284.4,819.1 1285.2,819.7 1286.0,819.7 1286.8,818.9 1287.6,818.8" fill="none" stroke="#f45b29" stroke-width="1.05" stroke-linejoin="round"/>
<polyline points="1098.0,817.1 1098.8,816.8 1099.6,817.3 1100.4,817.0 1101.2,816.4 1102.0,816.4 1102.8,815.6 1103.6,816.8 1104.4,816.9 1105.2,817.5 1106.0,817.9 1106.8,817.7 1107.6,817.3 1108.4,817.0 1109.2,816.7 1110.0,815.3 1110.8,815.4 1111.6,817.2 1112.4,817.0 1113.2,817.5 1114.0,817.7 1114.8,816.6 1115.6,817.0 1116.4,818.4 1117.2,817.7 1118.0,817.7 1118.8,818.3 1119.6,818.5 1120.4,818.4 1121.2,817.9 1122.0,817.9 1122.8,817.5 1123.6,816.1 1124.4,817.1 1125.2,817.7 1126.0,817.6 1126.8,816.7 1127.6,817.4 1128.4,816.2 1129.2,817.5 1130.0,818.1 1130.8,817.8 1131.6,818.1 1132.4,818.2 1133.2,817.4 1134.0,816.8 1134.8,816.9 1135.6,817.2 1136.4,816.2 1137.2,816.3 1138.0,816.8 1138.8,816.1 1139.6,817.1 1140.4,817.0 1141.2,816.6 1142.0,816.8 1142.8,817.4 1143.6,817.0 1144.4,817.5 1145.2,817.8 1146.0,818.2 1146.8,816.9 1147.6,817.4 1148.4,816.4 1149.2,816.5 1150.0,816.9 1150.8,816.5 1151.6,816.6 1152.4,816.7 1153.2,817.9 1154.0,817.5 1154.8,816.7 1155.6,816.5 1156.4,816.1 1157.2,815.4 1158.0,815.8 1158.8,814.9 1159.6,816.9 1160.4,817.2 1161.2,819.0 1162.0,817.6 1162.8,817.4 1163.6,816.1 1164.4,816.8 1165.2,818.4 1166.0,817.0 1166.8,818.0 1167.6,818.6 1168.4,818.1 1169.2,817.3 1170.0,817.6 1170.8,816.1 1171.6,816.7 1172.4,814.5 1173.2,814.5 1174.0,814.3 1174.8,813.9 1175.6,813.9 1176.4,813.9 1177.2,814.7 1178.0,814.6 1178.8,814.2 1179.6,813.5 1180.4,813.9 1181.2,814.0 1182.0,813.9 1182.8,813.6 1183.6,813.7 1184.4,814.1 1185.2,814.6 1186.0,813.6 1186.8,813.7 1187.6,813.9 1188.4,811.6 1189.2,812.0 1190.0,812.3 1190.8,813.0 1191.6,814.2 1192.4,813.4 1193.2,813.8 1194.0,814.0 1194.8,813.4 1195.6,813.0 1196.4,813.3 1197.2,813.7 1198.0,812.4 1198.8,812.8 1199.6,814.1 1200.4,813.6 1201.2,813.8 1202.0,814.0 1202.8,813.6 1203.6,813.7 1204.4,812.5 1205.2,814.2 1206.0,815.2 1206.8,815.1 1207.6,816.3 1208.4,801.5 1209.2,763.1 1209.7,738.9 1210.0,753.3 1210.8,792.6 1211.6,816.8 1212.4,818.0 1213.2,818.0 1214.0,817.6 1214.8,817.1 1215.6,813.4 1216.4,811.3 1217.2,812.3 1218.0,812.5 1218.8,811.2 1219.6,810.9 1220.4,812.1 1221.2,811.5 1222.0,812.3 1222.8,812.5 1223.6,813.0 1224.4,812.5 1225.2,810.5 1226.0,810.6 1226.8,811.0 1227.6,809.4 1228.4,810.5 1229.2,811.0 1230.0,811.3 1230.8,811.1 1231.6,811.4 1232.4,810.4 1233.2,811.0 1234.0,810.8 1234.8,810.9 1235.6,811.7 1236.4,812.3 1237.2,812.0 1238.0,813.4 1238.8,812.6 1239.6,812.1 1240.4,811.7 1241.2,811.6 1242.0,811.3 1242.8,811.6 1243.6,811.1 1244.4,812.4 1245.2,811.3 1246.0,812.0 1246.8,811.4 1247.6,811.7 1248.4,811.9 1249.2,812.3 1250.0,811.0 1250.8,814.2 1251.6,816.2 1252.4,816.4 1253.2,816.5 1254.0,816.7 1254.8,817.6 1255.6,817.1 1256.4,815.7 1257.2,816.3 1258.0,815.4 1258.8,814.8 1259.6,814.9 1260.4,815.9 1261.2,814.3 1262.0,814.6 1262.8,814.7 1263.6,815.2 1264.4,815.9 1265.2,815.8 1266.0,815.4 1266.8,816.0 1267.6,815.6 1268.4,814.6 1269.2,814.5 1270.0,814.9 1270.8,814.3 1271.6,814.0 1272.4,813.8 1273.2,815.0 1274.0,816.4 1274.8,815.3 1275.6,815.3 1276.4,815.5 1277.2,815.0 1278.0,815.4 1278.8,815.8 1279.6,814.3 1280.4,815.8 1281.2,815.0 1282.0,814.3 1282.8,813.4 1283.6,814.0 1284.4,814.1 1285.2,815.2 1286.0,815.2 1286.8,816.7 1287.6,816.5 1288.4,816.0 1289.2,815.8 1290.0,815.9 1290.8,814.8 1291.6,816.1 1292.4,815.7 1293.2,815.8 1294.0,815.5 1294.8,816.1 1295.6,815.1" fill="none" stroke="#1a6ef5" stroke-width="1.05" stroke-linejoin="round"/>
<polyline points="1098.0,817.1 1098.8,817.7 1099.6,816.4 1100.4,818.4 1101.2,817.6 1102.0,819.0 1102.8,816.8 1103.6,816.3 1104.4,814.9 1105.2,815.8 1106.0,815.5 1106.8,816.0 1107.6,816.7 1108.4,816.3 1109.2,817.3 1110.0,817.1 1110.8,816.0 1111.6,816.0 1112.4,816.4 1113.2,814.2 1114.0,814.8 1114.8,815.9 1115.6,815.8 1116.4,816.3 1117.2,816.6 1118.0,816.7 1118.8,814.5 1119.6,815.1 1120.4,815.3 1121.2,814.9 1122.0,813.5 1122.8,814.7 1123.6,815.8 1124.4,813.6 1125.2,815.9 1126.0,816.3 1126.8,815.5 1127.6,813.6 1128.4,815.4 1129.2,817.9 1130.0,816.5 1130.8,816.8 1131.6,816.8 1132.4,816.1 1133.2,815.8 1134.0,815.6 1134.8,816.2 1135.6,814.9 1136.4,813.9 1137.2,814.7 1138.0,815.7 1138.8,815.1 1139.6,815.0 1140.4,816.4 1141.2,816.7 1142.0,815.4 1142.8,815.7 1143.6,816.1 1144.4,815.9 1145.2,816.0 1146.0,816.0 1146.8,817.8 1147.6,815.4 1148.4,815.5 1149.2,816.5 1150.0,815.4 1150.8,815.3 1151.6,815.6 1152.4,814.8 1153.2,813.2 1154.0,808.2 1154.7,800.4 1154.8,801.5 1155.6,809.3 1156.4,814.7 1157.2,815.7 1158.0,815.1 1158.8,817.1 1159.6,816.9 1160.4,815.3 1161.2,814.6 1162.0,805.6 1162.4,801.1 1162.8,806.4 1163.6,814.4 1164.4,814.5 1165.2,814.4 1166.0,814.6 1166.8,816.7 1167.6,817.8 1168.4,818.2 1169.2,815.5 1170.0,816.5 1170.8,815.4 1171.6,814.7 1172.4,813.5 1173.2,812.9 1174.0,812.8 1174.8,814.1 1175.6,816.6 1176.4,815.1 1177.2,814.0 1178.0,812.5 1178.8,812.9 1179.6,813.5 1180.4,813.0 1181.2,814.5 1182.0,814.9 1182.8,815.1 1183.6,814.1 1184.4,811.7 1185.2,811.6 1186.0,811.1 1186.8,811.7 1187.6,812.0 1188.4,812.9 1189.2,813.2 1190.0,815.5 1190.8,815.6 1191.6,815.8 1192.4,814.0 1193.2,813.0 1194.0,812.0 1194.8,811.0 1195.6,812.1 1196.4,811.6 1197.2,810.4 1198.0,811.5 1198.8,811.1 1199.6,812.1 1200.4,814.0 1201.2,813.5 1202.0,814.1 1202.8,813.6 1203.6,813.9 1204.4,813.3 1205.2,816.3 1206.0,814.3 1206.8,813.7 1207.6,814.9 1208.4,816.2 1209.2,816.1 1210.0,815.4 1210.8,815.3 1211.6,815.2 1212.4,817.3 1213.2,817.9 1214.0,815.9 1214.8,815.7 1215.6,814.9 1216.4,813.9 1217.2,813.8 1218.0,813.3 1218.8,811.0 1219.6,810.9 1220.4,809.6 1221.2,809.7 1222.0,811.3 1222.8,811.5 1223.6,808.9 1224.4,810.1 1225.2,811.2 1226.0,809.7 1226.8,809.8 1227.6,810.0 1228.4,808.7 1229.2,811.0 1230.0,810.3 1230.8,811.3 1231.6,812.2 1232.4,811.9 1233.2,809.6 1234.0,809.3 1234.8,809.9 1235.6,809.4 1236.4,807.7 1237.2,806.9 1238.0,806.9 1238.8,806.1 1239.6,805.9 1240.0,805.7 1240.4,805.9 1241.2,806.5 1242.0,806.7 1242.8,806.6 1243.6,806.8 1244.4,807.7 1245.2,808.7 1246.0,810.2 1246.8,810.4 1247.6,811.1 1248.4,810.7 1249.2,811.7 1250.0,811.6 1250.8,814.2 1251.6,816.1 1252.4,817.2 1253.2,817.7 1254.0,818.1 1254.8,816.7 1255.6,815.6 1256.4,816.2 1257.2,814.9 1258.0,814.3 1258.8,812.8 1259.6,813.5 1260.4,813.9 1261.2,814.7 1262.0,814.3 1262.8,813.7 1263.6,813.7 1264.4,814.1 1265.2,813.6 1266.0,813.7 1266.8,813.6 1267.6,814.7 1268.4,814.3 1269.2,815.1 1270.0,815.5 1270.8,814.8 1271.6,812.1 1272.4,808.4 1273.2,805.2 1273.5,803.8 1274.0,806.2 1274.8,809.7 1275.6,812.0 1276.4,811.7 1277.2,812.8 1278.0,813.1 1278.8,813.8 1279.6,814.2 1280.4,815.0 1281.2,814.9 1282.0,816.6 1282.8,816.7 1283.6,815.3 1284.4,815.7 1285.2,814.5 1286.0,815.6 1286.8,815.3 1287.6,814.1 1288.4,811.5 1289.2,808.2 1290.0,804.7 1290.0,804.7 1290.8,807.6 1291.6,811.1 1292.4,814.5 1293.2,814.6 1294.0,814.4" fill="none" stroke="#a23df5" stroke-width="1.05" stroke-linejoin="round"/>
<polyline points="1098.0,816.2 1098.8,817.9 1099.6,818.1 1100.4,817.5 1101.2,815.9 1102.0,816.2 1102.8,817.8 1103.6,817.1 1104.4,817.9 1105.2,816.4 1106.0,816.7 1106.8,815.2 1107.6,815.9 1108.4,817.1 1109.2,818.2 1110.0,817.9 1110.8,817.0 1111.6,815.8 1112.4,815.9 1113.2,816.9 1114.0,816.4 1114.8,817.7 1115.6,816.9 1116.4,817.4 1117.2,815.8 1118.0,815.3 1118.8,815.5 1119.6,816.9 1120.4,816.3 1121.2,816.1 1122.0,816.8 1122.8,817.3 1123.6,815.9 1124.4,816.6 1125.2,816.2 1126.0,815.2 1126.8,817.1 1127.6,815.4 1128.4,815.0 1129.2,816.2 1130.0,817.2 1130.8,818.0 1131.6,816.7 1132.4,818.9 1133.2,817.2 1134.0,816.8 1134.8,817.4 1135.6,817.5 1136.4,817.5 1137.2,817.4 1138.0,816.3 1138.8,817.2 1139.6,816.0 1140.4,815.4 1141.2,816.1 1142.0,815.8 1142.8,816.6 1143.6,816.6 1144.4,816.2 1145.2,814.7 1146.0,815.5 1146.8,816.1 1147.6,816.3 1148.4,816.6 1149.2,817.6 1150.0,815.6 1150.8,816.5 1151.6,817.1 1152.4,817.5 1153.2,816.6 1154.0,814.1 1154.8,812.5 1155.6,813.3 1156.4,814.4 1157.2,815.3 1158.0,816.7 1158.8,816.0 1159.6,816.4 1160.4,814.7 1161.2,815.7 1162.0,817.0 1162.8,818.4 1163.6,819.2 1164.4,817.7 1165.2,817.0 1166.0,817.8 1166.8,818.7 1167.6,817.6 1168.4,817.6 1169.2,817.0 1170.0,816.9 1170.8,816.3 1171.6,816.8 1172.4,815.5 1173.2,814.7 1174.0,814.2 1174.8,813.2 1175.6,812.6 1176.4,813.5 1177.2,813.1 1178.0,815.3 1178.8,814.1 1179.6,814.0 1180.4,813.0 1181.2,812.5 1182.0,813.8 1182.8,813.9 1183.6,812.9 1184.4,813.7 1185.2,813.7 1186.0,814.3 1186.8,813.6 1187.6,813.4 1188.4,814.3 1189.2,815.3 1190.0,816.6 1190.8,814.8 1191.6,814.8 1192.4,815.0 1193.2,815.0 1194.0,815.3 1194.8,814.1 1195.6,813.4 1196.4,815.5 1197.2,814.9 1198.0,814.3 1198.8,814.4 1199.6,814.1 1200.4,812.5 1201.2,812.7 1202.0,812.1 1202.8,811.9 1203.6,814.0 1204.4,812.4 1205.2,813.9 1206.0,815.2 1206.8,815.1 1207.6,799.2 1208.4,760.6 1208.7,745.6 1209.2,771.0 1210.0,811.3 1210.8,818.0 1211.6,818.4 1212.4,817.7 1213.2,816.6 1214.0,816.2 1214.8,815.6 1215.6,812.8 1216.4,812.4 1217.2,812.1 1218.0,811.9 1218.8,811.8 1219.6,810.5 1220.4,809.9 1221.2,812.1 1222.0,811.2 1222.8,812.0 1223.6,812.6 1224.4,810.8 1225.2,809.7 1226.0,809.2 1226.8,809.3 1227.6,808.3 1228.4,810.4 1229.2,809.9 1230.0,810.9 1230.8,811.4 1231.6,812.7 1232.4,810.6 1233.2,809.2 1234.0,809.1 1234.8,810.3 1235.6,810.4 1236.4,811.5 1237.2,811.5 1238.0,810.0 1238.8,808.9 1239.6,809.1 1240.4,809.2 1241.2,810.0 1242.0,810.0 1242.8,810.5 1243.6,810.2 1244.4,811.1 1245.2,810.1 1246.0,810.6 1246.8,810.6 1247.6,810.8 1248.4,809.5 1249.2,809.3 1250.0,810.6 1250.8,813.9 1251.6,814.5 1252.4,815.2 1253.2,816.0 1254.0,816.1 1254.8,814.8 1255.6,814.9 1256.4,813.6 1257.2,814.4 1258.0,814.8 1258.8,814.5 1259.6,814.6 1260.4,815.1 1261.2,815.9 1262.0,815.7 1262.8,815.7 1263.6,815.3 1264.4,814.1 1265.2,813.9 1266.0,813.2 1266.8,813.6 1267.6,813.7 1268.4,813.5 1269.2,813.4 1270.0,813.0 1270.8,814.2 1271.6,814.0 1272.4,814.1 1273.2,813.3 1274.0,813.1 1274.8,814.2 1275.6,814.1 1276.4,813.7 1277.2,814.1 1278.0,813.2 1278.8,813.6 1279.6,815.1 1280.4,814.7 1281.2,814.0 1282.0,815.0 1282.8,814.3 1283.6,816.8 1284.4,814.2 1285.2,815.6 1286.0,815.7 1286.8,815.6 1287.6,816.5 1288.4,815.5 1289.2,816.0 1290.0,816.6 1290.8,817.9 1291.6,816.0 1292.4,814.5 1293.2,814.8 1294.0,814.6 1294.8,814.0 1295.6,814.7" fill="none" stroke="#f0112b" stroke-width="1.05" stroke-linejoin="round"/>
<polyline points="1098.0,815.5 1098.8,814.9 1099.6,815.2 1100.4,815.6 1101.2,816.4 1102.0,816.1 1102.8,814.6 1103.6,807.9 1104.4,797.3 1104.6,794.7 1105.2,802.5 1106.0,812.8 1106.8,814.4 1107.6,816.4 1108.4,815.1 1109.2,814.6 1110.0,814.4 1110.8,816.4 1111.6,817.7 1112.4,817.6 1113.2,817.1 1114.0,816.1 1114.8,815.8 1115.6,815.0 1116.4,815.8 1117.2,815.2 1118.0,814.8 1118.8,815.7 1119.6,813.8 1120.4,813.8 1121.2,813.2 1122.0,814.6 1122.8,815.6 1123.6,815.8 1124.4,815.7 1125.2,814.9 1126.0,814.8 1126.8,815.4 1127.6,816.3 1128.4,816.4 1129.2,814.7 1130.0,815.7 1130.8,815.3 1131.6,814.8 1132.4,816.5 1133.2,815.9 1134.0,814.3 1134.8,816.7 1135.6,816.4 1136.4,816.1 1137.2,816.5 1138.0,815.5 1138.8,815.5 1139.6,816.8 1140.4,815.4 1141.2,814.6 1142.0,813.9 1142.8,813.0 1143.6,813.5 1144.4,814.1 1145.2,815.8 1146.0,815.0 1146.8,815.7 1147.6,816.0 1148.4,816.9 1149.2,817.2 1150.0,817.0 1150.8,815.0 1151.6,817.1 1152.4,817.8 1153.2,816.5 1154.0,814.6 1154.8,814.3 1155.6,816.5 1156.4,818.5 1157.2,816.9 1158.0,816.9 1158.8,817.4 1159.6,815.5 1160.4,814.3 1161.2,814.5 1162.0,814.6 1162.8,814.4 1163.6,813.1 1164.4,813.4 1165.2,813.6 1166.0,813.7 1166.8,815.9 1167.6,814.3 1168.4,813.7 1169.2,813.8 1170.0,816.4 1170.8,815.4 1171.6,810.3 1172.4,807.0 1173.2,802.3 1174.0,798.1 1174.0,798.1 1174.8,802.2 1175.6,805.2 1176.4,808.7 1177.2,811.9 1178.0,811.8 1178.8,811.3 1179.6,811.6 1180.4,810.8 1181.2,812.1 1182.0,812.6 1182.8,811.5 1183.6,811.8 1184.4,812.9 1185.2,811.7 1186.0,810.5 1186.8,811.7 1187.6,813.4 1188.4,813.1 1189.2,813.0 1190.0,813.0 1190.8,811.4 1191.6,812.8 1192.4,811.4 1193.2,813.0 1194.0,813.6 1194.8,812.4 1195.6,811.3 1196.4,810.9 1197.2,811.1 1198.0,811.5 1198.8,811.7 1199.6,811.4 1200.4,812.0 1201.2,811.8 1202.0,811.5 1202.8,811.8 1203.6,811.3 1204.4,811.1 1205.2,810.8 1206.0,812.2 1206.8,813.9 1207.6,814.8 1208.4,815.0 1209.2,814.2 1210.0,741.1 1210.8,667.4 1210.8,667.4 1211.6,740.2 1212.4,816.5 1213.2,817.1 1214.0,816.1 1214.8,815.4 1215.6,812.8 1216.4,811.9 1217.2,810.3 1218.0,809.7 1218.8,810.1 1219.6,807.5 1220.4,807.9 1221.2,809.1 1222.0,809.4 1222.8,809.6 1223.6,809.7 1224.4,812.3 1225.2,811.7 1226.0,809.8 1226.8,810.9 1227.6,805.7 1228.4,799.0 1229.0,794.7 1229.2,796.1 1230.0,801.0 1230.8,808.4 1231.6,810.1 1232.4,810.2 1233.2,809.3 1234.0,808.3 1234.8,811.5 1235.6,809.6 1236.4,811.0 1237.2,809.7 1238.0,811.1 1238.8,810.3 1239.6,808.8 1240.4,809.2 1241.2,809.1 1242.0,808.5 1242.8,808.8 1243.6,809.1 1244.4,807.8 1245.2,807.4 1246.0,808.5 1246.8,806.2 1247.6,808.7 1248.4,808.1 1249.2,808.9 1250.0,809.0 1250.8,810.8 1251.6,812.3 1252.4,812.9 1253.2,815.3 1254.0,816.8 1254.8,815.6 1255.6,815.6 1256.4,815.7 1257.2,816.2 1258.0,813.8 1258.8,811.9 1259.6,807.2 1260.4,803.9 1260.6,802.8 1261.2,806.0 1262.0,810.9 1262.8,813.2 1263.6,811.7 1264.4,813.2 1265.2,811.7 1266.0,811.4 1266.8,812.3 1267.6,814.7 1268.4,812.7 1269.2,813.1 1270.0,813.8 1270.8,813.2 1271.6,812.8 1272.4,811.5 1273.2,813.3 1274.0,812.2 1274.8,811.1 1275.6,810.6 1276.4,811.8 1277.2,813.2 1278.0,812.2 1278.8,812.5 1279.6,812.7 1280.4,811.5 1281.2,812.5 1282.0,815.1 1282.8,814.8 1283.6,816.1 1284.4,813.4 1285.2,807.0 1286.0,801.3 1286.3,799.0 1286.8,802.7 1287.6,807.9 1288.4,812.9 1289.2,811.7 1290.0,812.4 1290.8,811.7 1291.6,810.9 1292.4,810.2 1293.2,812.1 1294.0,811.7 1294.8,815.0 1295.6,816.2 1296.4,817.5 1297.2,815.3 1298.0,816.2 1298.8,815.6 1299.6,815.4 1300.4,815.1 1301.2,815.5 1302.0,814.9 1302.8,812.9 1303.6,813.6 1304.4,813.4 1305.2,812.9 1306.0,813.7 1306.8,815.3 1307.6,815.6 1308.4,814.1 1309.2,815.9 1310.0,816.0 1310.8,814.4 1311.6,813.7 1312.4,814.0 1313.2,813.4 1314.0,813.7 1314.8,815.2 1315.6,816.5 1316.4,816.4 1317.2,814.7 1318.0,815.2 1318.8,815.9 1319.6,816.1 1320.4,817.0 1321.2,816.2 1322.0,816.7 1322.8,815.5 1323.6,817.5 1324.4,816.0 1325.2,816.1 1326.0,817.4 1326.8,815.5 1327.6,815.4 1328.4,817.3 1329.2,817.1 1330.0,815.8 1330.8,815.8 1331.6,814.5 1332.4,813.8 1333.2,813.4 1334.0,813.6 1334.8,812.6 1335.6,812.7 1336.4,812.4 1337.2,813.1 1338.0,810.6 1338.8,808.8 1339.6,807.6 1340.0,806.9" fill="none" stroke="#5ef03a" stroke-width="1.05" stroke-linejoin="round"/>
<polyline points="1098.0,815.8 1098.8,813.4 1099.6,813.4 1100.4,813.4 1101.2,813.9 1102.0,814.4 1102.8,814.4 1103.6,815.1 1104.4,816.3 1105.2,817.1 1106.0,817.8 1106.8,816.8 1107.6,815.9 1108.4,814.3 1109.2,814.4 1110.0,814.7 1110.8,814.5 1111.6,815.1 1112.4,817.3 1113.2,815.7 1114.0,816.2 1114.8,815.9 1115.6,816.2 1116.4,813.1 1117.2,813.0 1118.0,813.8 1118.8,815.8 1119.6,814.9 1120.4,816.2 1121.2,814.9 1122.0,816.9 1122.8,816.6 1123.6,815.3 1124.4,816.4 1125.2,816.1 1126.0,815.9 1126.8,814.9 1127.6,815.8 1128.4,815.1 1129.2,813.3 1130.0,815.9 1130.8,816.8 1131.6,815.9 1132.4,816.6 1133.2,817.7 1134.0,815.5 1134.8,814.6 1135.6,814.0 1136.4,813.6 1137.2,813.8 1138.0,815.5 1138.8,818.1 1139.6,816.7 1140.4,817.5 1141.2,816.8 1142.0,816.0 1142.8,817.2 1143.6,817.0 1144.4,814.7 1145.2,814.4 1146.0,816.7 1146.8,816.5 1147.6,816.3 1148.4,815.5 1149.2,814.9 1150.0,815.3 1150.8,815.8 1151.6,814.9 1152.4,816.8 1153.2,815.2 1154.0,815.1 1154.8,815.9 1155.6,816.5 1156.4,816.0 1157.2,817.5 1158.0,819.3 1158.8,817.5 1159.6,815.4 1160.4,815.7 1161.2,815.8 1162.0,815.9 1162.8,816.9 1163.6,816.1 1164.4,815.2 1165.2,815.5 1166.0,814.7 1166.8,816.3 1167.6,815.9 1168.4,816.7 1169.2,816.9 1170.0,816.3 1170.8,814.9 1171.6,813.3 1172.4,812.6 1173.2,814.0 1174.0,812.3 1174.8,814.3 1175.6,814.0 1176.4,813.3 1177.2,813.4 1178.0,812.8 1178.8,813.0 1179.6,814.1 1180.4,812.9 1181.2,813.1 1182.0,814.1 1182.8,813.7 1183.6,813.6 1184.4,813.1 1185.2,813.8 1186.0,813.4 1186.8,808.5 1187.6,803.1 1188.0,800.9 1188.4,803.3 1189.2,807.4 1190.0,812.4 1190.8,811.6 1191.6,809.9 1192.4,811.7 1193.2,812.2 1194.0,813.6 1194.8,812.9 1195.6,811.8 1196.4,810.2 1197.2,808.5 1198.0,807.2 1198.8,806.4 1199.6,805.3 1200.0,804.7 1200.4,805.4 1201.2,806.5 1202.0,807.7 1202.8,809.4 1203.6,810.8 1204.4,811.3 1205.2,813.3 1206.0,814.6 1206.8,815.7 1207.6,815.7 1208.4,816.1 1209.2,817.7 1210.0,817.3 1210.8,817.0 1211.6,744.3 1212.4,646.7 1212.6,622.5 1213.2,694.3 1214.0,789.5 1214.8,814.5 1215.6,814.0 1216.4,812.8 1217.2,812.5 1218.0,811.5 1218.8,809.9 1219.6,810.2 1220.4,811.7 1221.2,809.8 1222.0,803.3 1222.8,793.9 1223.4,787.6 1223.6,789.8 1224.4,797.7 1225.2,807.9 1226.0,810.1 1226.8,806.7 1227.6,800.9 1228.4,792.4 1228.5,791.4 1229.2,799.0 1230.0,805.7 1230.8,809.7 1231.6,810.1 1232.4,810.3 1233.2,809.7 1234.0,807.4 1234.8,806.3 1235.6,804.5 1236.4,803.4 1237.2,802.6 1238.0,800.7 1238.8,799.6 1239.6,798.6 1240.0,798.1 1240.4,798.6 1241.2,799.6 1242.0,800.5 1242.8,802.0 1243.6,802.5 1244.4,804.1 1245.2,804.8 1246.0,806.9 1246.8,808.3 1247.6,808.5 1248.4,810.7 1249.2,811.1 1250.0,810.4 1250.8,813.4 1251.6,813.0 1252.4,813.6 1253.2,814.8 1254.0,814.3 1254.8,813.7 1255.6,812.6 1256.4,813.4 1257.2,812.9 1258.0,813.1 1258.8,814.7 1259.6,814.9 1260.4,812.6 1261.2,814.1 1262.0,813.6 1262.8,812.2 1263.6,813.4 1264.4,812.3 1265.2,810.0 1266.0,806.6 1266.8,803.7 1267.0,802.8 1267.6,805.2 1268.4,808.6 1269.2,811.4 1270.0,816.2 1270.8,816.5 1271.6,814.7 1272.4,813.9 1273.2,817.2 1274.0,814.5 1274.8,815.2 1275.6,814.0 1276.4,813.0 1277.2,813.7 1278.0,814.3 1278.8,816.3 1279.6,815.0 1280.4,812.8 1281.2,814.7 1282.0,813.4 1282.8,813.0 1283.6,812.5 1284.4,814.3 1285.2,814.4 1286.0,814.1 1286.8,812.4 1287.6,814.1 1288.4,811.9 1289.2,806.4 1290.0,800.4 1290.0,800.4 1290.8,806.6 1291.6,812.4 1292.4,816.3 1293.2,815.8 1294.0,814.4 1294.8,816.1 1295.6,815.8 1296.4,816.8 1297.2,817.0 1298.0,817.2 1298.8,818.1 1299.6,817.3 1300.4,816.6 1301.2,817.6 1302.0,816.7 1302.8,816.8 1303.6,817.4 1304.4,817.1 1305.2,816.3 1306.0,815.9 1306.8,814.9 1307.6,815.5 1308.4,816.0 1309.2,818.0 1310.0,818.2 1310.8,817.2 1311.6,818.3 1312.4,818.8 1313.2,816.3 1314.0,816.7 1314.8,818.0 1315.6,819.7 1316.4,819.6 1317.2,816.3 1318.0,816.7 1318.8,816.3 1319.6,815.9 1320.4,816.6 1321.2,816.1 1322.0,816.1 1322.8,816.5 1323.6,811.9 1324.4,807.5 1324.8,804.9 1325.2,807.7 1326.0,813.3 1326.8,815.7 1327.6,816.4 1328.4,814.5 1329.2,816.6 1330.0,817.4 1330.8,819.6 1331.6,819.2 1332.4,817.9 1333.2,816.5 1334.0,817.4 1334.8,817.5 1335.6,815.5 1336.4,816.3 1337.2,815.7 1338.0,813.3 1338.8,812.0 1339.6,809.7 1340.0,808.8" fill="none" stroke="#f0112b" stroke-width="1.05" stroke-linejoin="round"/>
</g>
<clipPath id="legclip"><rect x="1350" y="570" width="150" height="243"/></clipPath><g clip-path="url(#legclip)">
<rect x="1360" y="592.1999999999999" width="16" height="1.2" fill="#f7a035" />
<circle cx="1367.8" cy="592.8" r="4" fill="#f7a035"/>
<text x="1380" y="596.6999999999999" font-size="11.3" fill="#333">Armand Bayou Park</text>
<rect x="1360" y="628.6999999999999" width="16" height="1.2" fill="#f45b29" />
<circle cx="1367.8" cy="629.3" r="4" fill="#f45b29"/>
<text x="1380" y="633.1999999999999" font-size="11.3" fill="#333">Bay Area Park</text>
<rect x="1360" y="665.1999999999999" width="16" height="1.2" fill="#1a6ef5" />
<circle cx="1367.8" cy="665.8" r="4" fill="#1a6ef5"/>
<text x="1380" y="669.6999999999999" font-size="11.3" fill="#333">Bayland Park</text>
<rect x="1360" y="701.6999999999999" width="16" height="1.2" fill="#5ef03a" />
<circle cx="1367.8" cy="702.3" r="4" fill="#5ef03a"/>
<text x="1380" y="706.1999999999999" font-size="11.3" fill="#333">Bayport Pump Station</text>
<rect x="1360" y="738.1999999999999" width="16" height="1.2" fill="#f0112b" />
<circle cx="1367.8" cy="738.8" r="4" fill="#f0112b"/>
<text x="1380" y="742.6999999999999" font-size="11.3" fill="#333">Baytown Park</text>
<rect x="1360" y="774.6999999999999" width="16" height="1.2" fill="#f7a035" />
<circle cx="1367.8" cy="775.3" r="4" fill="#f7a035"/>
<text x="1380" y="779.1999999999999" font-size="11.3" fill="#333">Boyce-Dorian Park</text>
<rect x="1360" y="811.1999999999999" width="16" height="1.2" fill="#f45b29" />
<circle cx="1367.8" cy="811.8" r="4" fill="#f45b29"/>
<text x="1380" y="815.6999999999999" font-size="11.3" fill="#333">Hartman Park</text>
</g>
<rect x="1506.7" y="575" width="10.8" height="237" fill="#f4f4f4" rx="5.4"/>
<rect x="1506.7" y="575" width="10.8" height="102" fill="#cbcbcb" rx="5.4"/>
</svg>
</body></html>
